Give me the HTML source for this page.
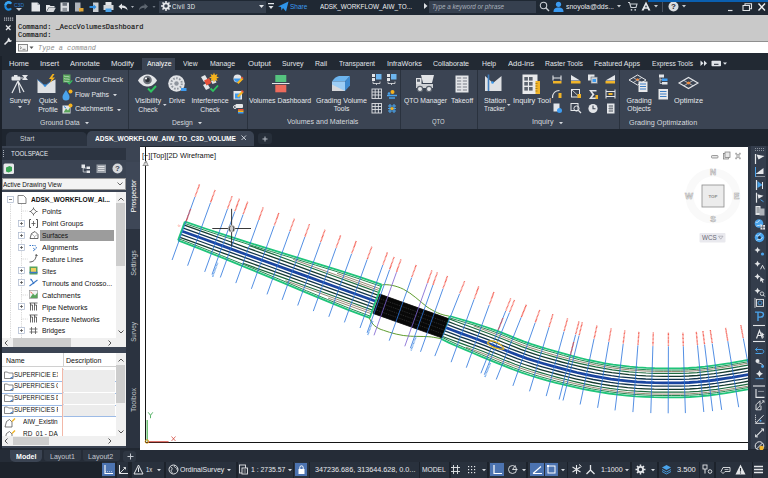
<!DOCTYPE html>
<html><head><meta charset="utf-8"><title>Civil 3D</title>
<style>
*{box-sizing:border-box;margin:0;padding:0}
html,body{width:768px;height:478px;overflow:hidden;background:#212832;font-family:"Liberation Sans",sans-serif;font-size:7.4px;color:#dfe3e8}
.a{position:absolute}
.t{position:absolute;white-space:nowrap;line-height:9px}
.c{text-align:center}
svg{position:absolute;overflow:visible}
#title{left:0;top:0;width:768px;height:15px;background:#1f2833}
#cmd{left:0;top:15px;width:768px;height:41px;background:#222933}
#cmdgray{left:16px;top:15px;width:752px;height:26px;background:#c9c9c9}
#cmdin{left:16px;top:40.600px;width:752px;height:12.400px;background:#fff;border-top:1px solid #8f8f8f}
.mono{font-family:"Liberation Mono",monospace;font-size:7px;color:#111;line-height:8.5px;-webkit-text-stroke:0.13px #111}
#tabs{left:0;top:56px;width:768px;height:14px;background:#222933}
#tabs .t{top:3px;font-size:7.5px;color:#e1e5ea}
#ribbon{left:2px;top:70px;width:766px;height:59.600px;background:#3b4453}
#ribbon .t{color:#e6e9ed;font-size:7.4px;line-height:8.6px}
.sep{position:absolute;top:0;width:1px;height:59px;background:#2a323e}
.pt{color:#d5d9de !important}
#ftabs{left:0;top:129px;width:768px;height:17.500px;background:#1e252f}
#ts{left:0;top:146px;width:139.500px;height:302px;background:#3b4453}
#vp{left:143px;top:147px;width:607px;height:296px;background:#fff;overflow:hidden}
#rt{left:750px;top:146px;width:18px;height:302px;background:#2b3340}
#ltabs{left:0;top:448px;width:768px;height:14px;background:#252c37}
#status{left:0;top:461.800px;width:768px;height:16.500px;background:#29313d}
</style></head><body>
<div class="a" id="title">
  <!-- app logo -->
  <svg style="left:3px;top:0.0px" width="10" height="12" viewBox="0 0 12 13" preserveAspectRatio="none"><path d="M10.800 3.200A5.200 5.200 0 1 0 10.800 9.800L8.600 8.300A2.600 2.600 0 1 1 8.600 4.700Z" fill="#1b8ae0"></path><path d="M10.800 3.200A5.200 5.200 0 0 0 1.500 5.500L4.100 6A2.600 2.600 0 0 1 8.600 4.700Z" fill="#3aa5f2"></path></svg>
  <div class="t" style="left:14px;top:2px;font-size:5px;line-height:6px;color:#2c7fd0">C3D</div>
  <svg style="left:16px;top:8.0px" width="6" height="3"><path d="M0 0h6l-3 3z" fill="#c8ccd2"></path></svg>
  <!-- qat icons -->
  <svg style="left:30px;top:1.0px" width="110" height="12">
    <path d="M1.5 1.5h6l2.5 2.5v6.5h-8.5z" fill="#e4e6e9"></path><path d="M7.5 1.5v2.5h2.500z" fill="#9aa0a8"></path>
    <path d="M16 4h3.5l1 1h4v1.500h-6l-2.500 4.500z" fill="#e4e6e9"></path><path d="M18.800 6.800h7l-2.300 4.200h-7z" fill="#d4d7db"></path>
    <path d="M30.500 1.500h8.500v9h-8.500z" fill="#d9dce0"></path><path d="M32.500 1.500h4.500v3.300h-4.500z" fill="#6d747e"></path><path d="M32.500 6.800h4.500v3.700h-4.500z" fill="#8d939b"></path>
    <path d="M45 1.500h5.500v9h-5.500z" fill="#aeb3ba"></path><path d="M49 7h4.500v3.500h-4.500z" fill="#e0a637"></path>
    <path d="M63 1.500h5.500v9.500h-5.500z" fill="#c9cdd2"></path><path d="M59.500 5h4v-1.700l3 2.700-3 2.700v-1.700h-4z" fill="#2f8de0"></path>
    <path d="M75.500 1h6v3h-6z" fill="#e4e6e9"></path><path d="M73.500 4h10v5h-10z" fill="#d3d6da"></path><path d="M75.500 7.500h6v3.500h-6z" fill="#4aa3ea"></path>
    <path d="M88.500 5.500l3.500-3v2c3 0 5.500 1.500 5.500 5-1-2-2.700-2.800-5.500-2.800v2z" fill="#e4e6e9"></path>
    <path d="M101 5h3l-1.500 2z" fill="#aab0b8"></path>
  </svg>
  <svg style="left:138px;top:1.0px" width="22" height="12">
    <path d="M10 5.500l-3.500-3v2c-3 0-5.500 1.500-5.500 5 1-2 2.700-2.800 5.500-2.800v2z" fill="#5d6670"></path>
    <path d="M14.500 5h3l-1.500 2z" fill="#6d7680"></path>
  </svg>
  <!-- workspace dropdown -->
  <div class="a" style="left:159px;top:1px;width:107px;height:12px;background:#353f4d"></div>
  <svg style="left:161px;top:1.0px" width="10" height="10" viewBox="0 0 10 10"><circle cx="5" cy="5" r="2.700" fill="none" stroke="#e6e8eb" stroke-width="1.800"></circle><g stroke="#e6e8eb" stroke-width="1.500"><path d="M5 0v2M5 8v2M0 5h2M8 5h2M1.500 1.500l1.400 1.400M7.100 7.100l1.400 1.400M8.500 1.500l-1.400 1.400M2.900 7.100l-1.400 1.400"></path></g></svg>
  <div class="t" style="left: 171.6px; top: 1.9px; font-size: 8px; letter-spacing: 0.5px; color: rgb(232, 234, 237); transform-origin: left center; transform: scaleX(0.7414);">Civil 3D</div>
  <svg style="left:259px;top:5.0px" width="5" height="3"><path d="M0 0h5l-2.500 3z" fill="#e0e3e7"></path></svg>
  <svg style="left:268px;top:3.0px" width="6" height="7"><path d="M0 0h6v1.200h-6zM0.500 3h5l-2.500 3z" fill="#e0e3e7"></path></svg>
  <!-- share -->
  <svg style="left:278px;top:1.0px" width="11" height="11"><path d="M0 5.500l10.500-5-2.500 10-3-3.500-1.500 2.500-0.500-3.500z" fill="#2f95ea"></path></svg>
  <div class="t" style="left: 290px; top: 1.9px; font-size: 7.4px; color: rgb(62, 156, 240); transform-origin: left center; transform: scaleX(0.8766);">Share</div>
  <div class="t" style="left: 320.3px; top: 1.9px; font-size: 7px; color: rgb(240, 242, 244); transform-origin: left center; transform: scaleX(0.9074);">ADSK_WORKFLOW_AIW_TO...</div>
  <svg style="left:424px;top:3.0px" width="4" height="6"><path d="M0 0l3.500 3-3.500 3z" fill="#dfe2e6"></path></svg>
  <div class="a" style="left:429px;top:1px;width:107px;height:12px;background:#36404f"></div>
  <div class="t" style="left: 431.5px; top: 1.9px; font-size: 6.8px; font-style: italic; color: rgb(170, 177, 187); transform-origin: left center; transform: scaleX(0.9222);">Type a keyword or phrase</div>
  <svg style="left:539px;top:1.0px" width="11" height="11"><circle cx="4.500" cy="4.500" r="3.200" fill="none" stroke="#c8cdd3" stroke-width="1.100"></circle><path d="M6.800 6.800l3.200 3.200" stroke="#c8cdd3" stroke-width="1.400"></path></svg>
  <svg style="left:553px;top:1.0px" width="11" height="11"><circle cx="5.500" cy="3.300" r="2.600" fill="#3b9af0"></circle><path d="M0.500 11c0-3.500 2-4.500 5-4.500s5 1 5 4.500z" fill="#3b9af0"></path></svg>
  <div class="t" style="left: 566.3px; top: 1.9px; font-size: 7.3px; color: rgb(232, 234, 237); transform-origin: left center; transform: scaleX(0.9523);">snoyola@dds...</div>
  <svg style="left:617px;top:5.0px" width="4" height="3"><path d="M0 0h4l-2 2.500z" fill="#c8cdd3"></path></svg>
  <svg style="left:628px;top:2.0px" width="9" height="9"><path d="M0 0.500h1.500l1.500 5h5l1-3.500h-7" fill="none" stroke="#c8cdd3" stroke-width="1.100"></path><circle cx="3.500" cy="7.800" r="0.900" fill="#c8cdd3"></circle><circle cx="7.200" cy="7.800" r="0.900" fill="#c8cdd3"></circle></svg>
  <svg style="left:641px;top:1.0px" width="10" height="10"><path d="M5 0.500l4.500 9h-2.200l-0.800-1.800h-3l-0.800 1.800h-2.200z" fill="#e4e6e9"></path><path d="M5 4l1 2.300h-2z" fill="#1f2833"></path></svg>
  <svg style="left:654px;top:5.0px" width="4" height="3"><path d="M0 0h4l-2 2.500z" fill="#c8cdd3"></path></svg>
  <div class="a" style="left:662px;top:2px;width:1px;height:10px;background:#4a5260"></div>
  <svg style="left:668px;top:1.0px" width="11" height="11"><circle cx="5.500" cy="5.500" r="5" fill="#d9dce0"></circle><text x="5.500" y="8.300" font-size="8" font-weight="bold" text-anchor="middle" fill="#1f2833" font-family="Liberation Sans">?</text></svg>
  <svg style="left:682px;top:5.0px" width="4" height="3"><path d="M0 0h4l-2 2.500z" fill="#c8cdd3"></path></svg>
  <div class="a" style="left:648px;top:0;width:120px;height:2px;background:#0a5fb0"></div>
  <!-- window buttons -->
  <svg style="left:726px;top:1.0px" width="42" height="12"><path d="M2 9.500h4.500" stroke="#dfe2e6" stroke-width="1.200"></path><path d="M17 4.500h6.500v5h-6.500zM19 4.500v-1.800h6.500v5h-2" fill="none" stroke="#dfe2e6" stroke-width="1.100"></path><path d="M32.500 2.500l6.500 7M39 2.500l-6.500 7" stroke="#eef0f2" stroke-width="1.400"></path></svg>
</div>
<div class="a" id="cmd"></div>
<div class="a" id="cmdgray"></div>
<div class="a" id="cmdin"></div>
<svg style="left:3px;top:16px" width="12" height="38">
  <g fill="#b9bec5"><rect x="1" y="1.500" width="1.200" height="1.200"></rect><rect x="3" y="1.500" width="1.200" height="1.200"></rect><rect x="5" y="1.500" width="1.200" height="1.200"></rect><rect x="7" y="1.500" width="1.200" height="1.200"></rect><rect x="9" y="1.500" width="1.200" height="1.200"></rect><rect x="1" y="3.500" width="1.200" height="1.200"></rect><rect x="3" y="3.500" width="1.200" height="1.200"></rect><rect x="5" y="3.500" width="1.200" height="1.200"></rect><rect x="7" y="3.500" width="1.200" height="1.200"></rect><rect x="9" y="3.500" width="1.200" height="1.200"></rect></g>
  <path d="M3 9.500l4.500 4.500M7.500 9.500l-4.500 4.500" stroke="#e4e6e9" stroke-width="1.300"></path>
  <path d="M1.500 28.500l5-5" stroke="#e4e6e9" stroke-width="1.600"></path><path d="M6 21.500a2.300 2.300 0 1 0 3 3l-1.500-0.200-1-1.300z" fill="#e4e6e9"></path>
</svg>
<div class="t mono" style="left: 18px; top: 22.5px; transform-origin: left center; transform: scaleX(0.9958);">Command: _AeccVolumesDashboard</div>
<div class="t mono" style="left: 18px; top: 31px; transform-origin: left center; transform: scaleX(0.9967);">Command:</div>
<svg style="left:18px;top:44px" width="18" height="8"><rect x="0.500" y="0.500" width="9" height="6.500" fill="#f4f4f4" stroke="#6a6a6a" stroke-width="0.800"></rect><path d="M2 2.500l1.500 1.300-1.500 1.300M4.500 5.300h3" stroke="#555" stroke-width="0.700" fill="none"></path><path d="M11.500 2.500h4l-2 2.500z" fill="#555"></path></svg>
<div class="t mono" style="left: 38px; top: 43.5px; font-style: italic; color: rgb(143, 143, 143); -webkit-text-stroke: 0px; transform-origin: left center; transform: scaleX(0.9862);">Type a command</div>
<div class="a" id="tabs">
  <div class="a" style="left:141.500px;top:1.500px;width:33px;height:12.500px;background:#3b4453"></div>
  <div class="t" style="left: 9px; transform-origin: left center; transform: scaleX(0.9992);">Home</div>
  <div class="t" style="left: 40px; transform-origin: left center; transform: scaleX(1.0125);">Insert</div>
  <div class="t" style="left: 70px; transform-origin: left center; transform: scaleX(0.999);">Annotate</div>
  <div class="t" style="left: 111px; transform-origin: left center; transform: scaleX(1.041);">Modify</div>
  <div class="t" style="left: 146.5px; color: rgb(255, 255, 255); transform-origin: left center; transform: scaleX(0.918);">Analyze</div>
  <div class="t" style="left: 183px; transform-origin: left center; transform: scaleX(0.8992);">View</div>
  <div class="t" style="left: 210px; transform-origin: left center; transform: scaleX(0.9222);">Manage</div>
  <div class="t" style="left: 247.5px; transform-origin: left center; transform: scaleX(1.0215);">Output</div>
  <div class="t" style="left: 281.5px; transform-origin: left center; transform: scaleX(0.921);">Survey</div>
  <div class="t" style="left: 314.5px; transform-origin: left center; transform: scaleX(0.9287);">Rail</div>
  <div class="t" style="left: 339px; transform-origin: left center; transform: scaleX(0.8961);">Transparent</div>
  <div class="t" style="left: 386.5px; transform-origin: left center; transform: scaleX(0.9689);">InfraWorks</div>
  <div class="t" style="left: 433px; transform-origin: left center; transform: scaleX(0.9385);">Collaborate</div>
  <div class="t" style="left: 482px; transform-origin: left center; transform: scaleX(0.9069);">Help</div>
  <div class="t" style="left: 508px; transform-origin: left center; transform: scaleX(1.0221);">Add-ins</div>
  <div class="t" style="left: 545px; transform-origin: left center; transform: scaleX(0.9146);">Raster Tools</div>
  <div class="t" style="left: 594px; transform-origin: left center; transform: scaleX(0.9427);">Featured Apps</div>
  <div class="t" style="left: 652px; transform-origin: left center; transform: scaleX(0.8805);">Express Tools</div>
  <svg style="left:700px;top:4px" width="30" height="7"><path d="M0.500 0.500l3 2.800-3 2.800zM4 0.500l3 2.800-3 2.800z" fill="#e1e5ea"></path><rect x="11.500" y="0.800" width="9.500" height="5.400" rx="0.800" fill="#e1e5ea"></rect><rect x="14" y="3.800" width="4.500" height="1" fill="#222933"></rect><path d="M23 2.500h4l-2 2.300z" fill="#e1e5ea"></path></svg>
</div>
<div class="a" id="ribbon">
  <div class="sep" style="left:125.500px"></div>
  <div class="sep" style="left:244.500px"></div>
  <div class="sep" style="left:398px"></div>
  <div class="sep" style="left:474.500px"></div>
  <div class="sep" style="left:617px"></div>
  <!-- coordinates inside ribbon: x-2, y-70 -->
  <!-- Panel: Ground Data -->
  <svg style="left:7px;top:3px" width="20" height="21" viewBox="0 0 20 21">
    <path d="M9 8L3 20M9 8l2 12M9 8l6 11" stroke="#e4e6e9" stroke-width="1.200" fill="none"></path>
    <rect x="2.500" y="3.500" width="9" height="4" rx="1" fill="#e4e6e9"></rect><rect x="5" y="2" width="3.500" height="2" fill="#e4e6e9"></rect>
    <path d="M13 2h6l-2 2.500 2 2.500h-6l2-2.500z" fill="#e4e6e9"></path><path d="M11.500 5h3" stroke="#e4e6e9"></path>
  </svg>
  <div class="t c" style="left: 2px; top: 27px; width: 32px; transform-origin: center center; transform: scaleX(0.9211);">Survey</div>
  <svg style="left:16px;top:35.500px" width="4" height="3"><path d="M0 0h4l-2 2.300z" fill="#d5d9de"></path></svg>
  <svg style="left:35px;top:2px" width="21" height="22" viewBox="0 0 21 22">
    <path d="M0.500 7.500L8 14l5-4 5.500-2.500V21h-18z" fill="#dfe1e4"></path><path d="M0.500 7.500L8 14l5-4" stroke="#3f7fc0" stroke-width="1" fill="none"></path><circle cx="8" cy="13.500" r="1.300" fill="#2f8de0"></circle>
    <path d="M15.500 2l-3.500 5h2.500l-1.500 4 5-5.500h-2.800l2.300-3.500z" fill="#f5b31e"></path>
  </svg>
  <div class="t c" style="left: 30px; top: 27px; width: 32px; transform-origin: center center; transform: scaleX(0.9626);">Quick</div>
  <div class="t c" style="left: 30px; top: 35.8px; width: 32px; transform-origin: center center; transform: scaleX(0.9402);">Profile</div>
  <svg style="left:60px;top:4px" width="11" height="11"><rect x="1" y="0.500" width="7.500" height="8" fill="#5aa45c"></rect><path d="M2 2c2 1 3 0 5.500 1M2 4.500c2 1 3 0 5.500 1M2 7c2 1 3 0 5.500 1" stroke="#cfe8d0" stroke-width="0.700" fill="none"></path><path d="M5.500 8l1.800 1.800 3-3.500" stroke="#39c060" stroke-width="1.300" fill="none"></path></svg>
  <svg style="left:60px;top:18.500px" width="11" height="11"><path d="M4 1c2 3.500 3.500 5 3.500 7a3.500 3.500 0 0 1-7 0c0-2 1.500-3.500 3.500-7z" fill="#4aa3ea"></path><circle cx="8.500" cy="2.500" r="2" fill="#f5b31e"></circle></svg>
  <svg style="left:60px;top:33px" width="11" height="11"><rect x="0.500" y="2.500" width="8" height="8" fill="#e4e6e9"></rect><path d="M1.500 9.500l2.500-4 2 2 2-3v5z" fill="#5aa45c"></path><circle cx="8.500" cy="2.500" r="2" fill="#f5b31e"></circle><path d="M2 3.500l2 1.500" stroke="#2f8de0"></path></svg>
  <div class="t" style="left: 73px; top: 6px; transform-origin: left center; transform: scaleX(0.9737);">Contour Check</div>
  <div class="t" style="left: 73px; top: 20.5px; transform-origin: left center; transform: scaleX(0.9299);">Flow Paths</div>
  <div class="t" style="left: 73px; top: 35.2px; transform-origin: left center; transform: scaleX(0.9635);">Catchments</div>
  <svg style="left:111px;top:24px" width="4" height="3"><path d="M0 0h4l-2 2.300z" fill="#d5d9de"></path></svg>
  <svg style="left:115px;top:38.500px" width="4" height="3"><path d="M0 0h4l-2 2.300z" fill="#d5d9de"></path></svg>
  <div class="t pt" style="left: 38px; top: 48.5px; transform-origin: left center; transform: scaleX(0.9379);">Ground Data</div>
  <svg style="left:83px;top:52px" width="4" height="3"><path d="M0 0h4l-2 2.300z" fill="#d5d9de"></path></svg>
  <!-- Panel: Design -->
  <svg style="left:135px;top:3px" width="22" height="20" viewBox="0 0 22 20">
    <path d="M1 7.500c3-5 7-6 9.500-6s6.500 1 9.500 6c-3 5-7 6-9.500 6s-6.500-1-9.500-6z" fill="#e4e6e9"></path><circle cx="10.500" cy="7" r="4.300" fill="#6a7078"></circle><circle cx="10.500" cy="7" r="2.300" fill="#2c3138"></circle><circle cx="9" cy="5.500" r="1" fill="#fff"></circle>
    <path d="M11 15.500l3 3 5-5.500" stroke="#2fc45f" stroke-width="2" fill="none"></path>
  </svg>
  <div class="t c" style="left: 128px; top: 27px; width: 36px; transform-origin: center center; transform: scaleX(0.9864);">Visibility</div>
  <div class="t c" style="left: 128px; top: 35.8px; width: 36px; transform-origin: center center; transform: scaleX(0.9259);">Check</div>
  <svg style="left:160.500px;top:33.500px" width="4" height="3"><path d="M0 0h3.600l-1.800 2z" fill="#d5d9de"></path></svg>
  <svg style="left:165px;top:3.500px" width="20" height="20" viewBox="0 0 20 20">
    <circle cx="9.500" cy="9.500" r="8.300" fill="#e1e3e6"></circle><circle cx="9.500" cy="9.500" r="5.300" fill="none" stroke="#8f959d" stroke-width="2" stroke-dasharray="1.500 1.500"></circle><circle cx="9.500" cy="9.500" r="2.200" fill="#8f959d"></circle>
    <rect x="14" y="14" width="5.500" height="3" fill="#3e9cf0"></rect>
  </svg>
  <div class="t c" style="left: 159px; top: 27px; width: 32px; transform-origin: center center; transform: scaleX(0.9275);">Drive</div>
  <svg style="left:197px;top:2px" width="22" height="22" viewBox="0 0 22 22">
    <path d="M2 5l4-2 3 5-4 2zM4 13l4-2 3 5-4 2z" fill="#e4e6e9"></path><rect x="6" y="7" width="5.500" height="5.500" transform="rotate(-25 8.700 9.700)" fill="#e8503a"></rect><path d="M12 9l4-1.500 1.500 3-4 1.500z" fill="#e4e6e9"></path>
    <path d="M15 0.500l1 2.500 2.500-1-1 2.500 2.500 1-2.500 1 1 2.500-2.500-1-1 2.500-1-2.500-2.500 1 1-2.500-2.500-1 2.500-1-1-2.500 2.500 1z" fill="#f5b31e"></path>
    <path d="M11.500 16.500l2.500 2.500 5-5.500" stroke="#2fc45f" stroke-width="1.800" fill="none"></path>
  </svg>
  <div class="t c" style="left: 184px; top: 27px; width: 48px; transform-origin: center center; transform: scaleX(0.9429);">Interference</div>
  <div class="t c" style="left: 184px; top: 35.8px; width: 48px; transform-origin: center center; transform: scaleX(0.9259);">Check</div>
  <svg style="left:231px;top:4px" width="11" height="11"><circle cx="4.500" cy="4.500" r="4" fill="#e4e6e9"></circle><path d="M1 4.500a3.500 3.500 0 0 0 7 0z" fill="#3e9cf0"></path><path d="M4 8.500l5-5 1.500 1.500-5 5z" fill="#f5b31e"></path><path d="M8.500 3l1.500 1.500" stroke="#e8503a" stroke-width="1.500"></path></svg>
  <svg style="left:231px;top:18.500px" width="11" height="11"><rect x="0.500" y="2" width="8.500" height="8.500" fill="#e4e6e9"></rect><rect x="2" y="4.500" width="5.500" height="5" fill="#3e9cf0"></rect><path d="M4 7l5-5 1.500 1.500-5 5z" fill="#f5b31e"></path><path d="M8.500 1.500l1.800 1.800" stroke="#e8503a" stroke-width="1.500"></path></svg>
  <svg style="left:231px;top:33px" width="11" height="11"><rect x="2.500" y="1" width="7.500" height="4" rx="1" fill="#e4e6e9"></rect><circle cx="2" cy="4" r="1.500" fill="none" stroke="#e4e6e9"></circle><rect x="5" y="6" width="5.500" height="1.500" fill="#e8503a"></rect><rect x="5" y="7.500" width="5.500" height="1.500" fill="#f5b31e"></rect><rect x="5" y="9" width="5.500" height="1.500" fill="#3e9cf0"></rect></svg>
  <div class="t pt" style="left: 170px; top: 48.5px; transform-origin: left center; transform: scaleX(0.9037);">Design</div>
  <svg style="left:196px;top:52px" width="4" height="3"><path d="M0 0h4l-2 2.300z" fill="#d5d9de"></path></svg>
  <!-- Panel: Volumes and Materials -->
  <svg style="left:269px;top:4px" width="20" height="19"><rect x="4.300" y="1" width="11" height="7" fill="#55c37f"></rect><rect x="1" y="9" width="17.500" height="1" fill="#e4e6e9"></rect><rect x="4.300" y="10.800" width="11" height="7.500" fill="#ec6a5c"></rect></svg>
  <div class="t" style="left: 247.4px; top: 26.5px; transform-origin: left center; transform: scaleX(0.9345);">Volumes Dashboard</div>
  <svg style="left:329px;top:5px" width="20" height="17" viewBox="0 0 20 17"><path d="M1 6.500c2-3 4-5 7-5.500h11l-5 5.500z" fill="#6db5ef"></path><path d="M14 6.500l5-5.500v9.500l-5 5.500z" fill="#3e8ad0"></path><path d="M1 6.500h13v9.500h-13z" fill="#9ccdf5"></path><path d="M1 9.500l13 6.500h-13z" fill="#d6d8db"></path></svg>
  <div class="t c" style="left: 310px; top: 26.5px; width: 59px; transform-origin: center center; transform: scaleX(0.9623);">Grading Volume</div>
  <div class="t c" style="left: 310px; top: 35.4px; width: 59px; transform-origin: center center; transform: scaleX(0.9093);">Tools</div>

  <svg style="left:369px;top:3px" width="27" height="42">
    <g fill="#e4e6e9"><rect x="1" y="1" width="3" height="3"></rect><rect x="5" y="1" width="5.500" height="5.500" fill="#6db5ef"></rect><rect x="1" y="5" width="3" height="3"></rect><path d="M2 8.500v2h7v-2M5.500 10.500v1.500" stroke="#e4e6e9" fill="none" stroke-width="0.800"></path>
    <rect x="16" y="1" width="3" height="3"></rect><rect x="20" y="1" width="5.500" height="5.500" fill="#6db5ef"></rect><rect x="16" y="5" width="3" height="3"></rect><path d="M17 8.500v2h7v-2M20.500 10.500v1.500" stroke="#e4e6e9" fill="none" stroke-width="0.800"></path></g>
    <g fill="none" stroke="#dfe1e4" stroke-width="0.900"><rect x="1" y="16" width="9.500" height="9.500"></rect><path d="M1 19h9.500M1 22h9.500M4.200 16v9.500M7.400 16v9.500"></path><rect x="1" y="30.500" width="9.500" height="9.500"></rect><path d="M1 33.500h9.500M1 36.500h9.500M4.200 30.500v9.500M7.400 30.500v9.500"></path></g>
    <circle cx="21.500" cy="19" r="2" fill="#f5b31e"></circle><path d="M16 22.500h10M18 25h6" stroke="#4aa3ea" stroke-width="1.300"></path><circle cx="18" cy="20.500" r="1.300" fill="#4aa3ea"></circle>
    <path d="M17 33h8M17 35.500h8M17 38h8M19 31v9M23 31v9" stroke="#4aa3ea" stroke-width="1.100"></path><circle cx="21" cy="35.500" r="1.600" fill="#f5b31e"></circle>
  </svg>
  <div class="t pt" style="left: 285px; top: 48px; transform-origin: left center; transform: scaleX(0.955);">Volumes and Materials</div>
  <!-- Panel: QTO -->
  <svg style="left:413px;top:4px" width="20" height="19" viewBox="0 0 20 19"><path d="M6 1h13l-2 8h-9z" fill="#e1e3e6"></path><path d="M1 4h5.500v8h-5.500z" fill="#e1e3e6"></path><rect x="2" y="5.200" width="3" height="2.600" fill="#5b636e"></rect><rect x="1" y="10" width="17" height="4" fill="#cfd2d6"></rect><circle cx="5" cy="15" r="2.600" fill="#e4e6e9" stroke="#5b636e" stroke-width="1.200"></circle><circle cx="14" cy="15" r="2.600" fill="#e4e6e9" stroke="#5b636e" stroke-width="1.200"></circle></svg>
  <div class="t" style="left: 401.5px; top: 26.5px; transform-origin: left center; transform: scaleX(0.9128);">QTO Manager</div>
  <svg style="left:452.500px;top:4.500px" width="14" height="18"><rect x="0.500" y="0.500" width="13" height="17" fill="#e4e6e9"></rect><path d="M2 3h4.200M7.800 3h4.200M2 6h4.200M7.800 6h4.200M2 9h4.200M7.800 9h4.200M2 12h4.200M7.800 12h4.200M2 15h4.200M7.800 15h4.200" stroke="#9a9fa7" stroke-width="1.300"></path></svg>
  <div class="t" style="left: 448.5px; top: 26.5px; transform-origin: left center; transform: scaleX(0.9366);">Takeoff</div>
  <div class="t pt" style="left: 429.7px; top: 48px; transform-origin: left center; transform: scaleX(0.7992);">QTO</div>
  <!-- Panel: Inquiry -->
  <svg style="left:482px;top:4px" width="19" height="18" viewBox="0 0 19 18"><path d="M1 2l8 7 8.500-7v15h-16.500z" fill="#dfe1e4"></path><path d="M4.500 0.500v16.500" stroke="#3f7fc0" stroke-width="1.600"></path><circle cx="8.500" cy="8.500" r="1.300" fill="#3e9cf0"></circle></svg>
  <div class="t" style="left: 481.8px; top: 26.5px; transform-origin: left center; transform: scaleX(0.9646);">Station</div>
  <div class="t" style="left: 481.8px; top: 35.4px; transform-origin: left center; transform: scaleX(0.8555);">Tracker</div>
  <svg style="left:504.800px;top:33.500px" width="4" height="3"><path d="M0 0h3.600l-1.800 2z" fill="#d5d9de"></path></svg>
  <svg style="left:520px;top:3.500px" width="20" height="21" viewBox="0 0 20 21"><rect x="0.500" y="0.500" width="15" height="19.500" fill="#e8e9eb"></rect><g fill="#5b636e"><rect x="2.300" y="3" width="3.600" height="3.600"></rect><rect x="7" y="3" width="3.600" height="3.600"></rect><rect x="2.300" y="8" width="3.600" height="3.600"></rect><rect x="7" y="8" width="3.600" height="3.600"></rect><rect x="2.300" y="13" width="3.600" height="3.600"></rect><rect x="7" y="13" width="3.600" height="3.600"></rect></g><rect x="13.500" y="7" width="4.500" height="13" fill="#f0b429"></rect><path d="M13.500 9.500h2M13.500 12h2M13.500 14.500h2M13.500 17h2" stroke="#7a5a10" stroke-width="0.600"></path></svg>
  <div class="t" style="left: 510.5px; top: 26.5px; transform-origin: left center; transform: scaleX(1.0061);">Inquiry Tool</div>
  <svg style="left:549px;top:3px" width="66" height="42">
    <!-- col1 -->
    <path d="M2 2.500v5M10 2.500v5M2 5h8" stroke="#e4e6e9" stroke-width="1.100" fill="none"></path><rect x="2" y="8" width="8.500" height="2.500" fill="#f0b429"></rect>
    <path d="M1.500 25c0-5 3-7.500 7-7.500" stroke="#e4e6e9" stroke-width="1.200" fill="none"></path><rect x="7.500" y="20" width="3" height="5" fill="#f0b429"></rect>
    <rect x="2.500" y="30.500" width="6" height="8" fill="#e4e6e9"></rect><circle cx="8.500" cy="37.500" r="2.500" fill="#3e9cf0"></circle>
    <!-- col2 -->
    <path d="M20 2v5.500h9z" fill="#e4e6e9"></path><rect x="20" y="8" width="9.500" height="2.500" fill="#f0b429"></rect>
    <rect x="20.500" y="16.500" width="8" height="7.500" fill="none" stroke="#e4e6e9" stroke-width="1"></rect><path d="M20.500 16.500l8 7.500" stroke="#e4e6e9" stroke-width="0.800"></path><rect x="26.500" y="21" width="3.500" height="4" fill="#f0b429"></rect>
    <rect x="20" y="30.500" width="7" height="7" fill="none" stroke="#e4e6e9" stroke-width="1"></rect><circle cx="25.500" cy="35.500" r="2.600" fill="none" stroke="#e4e6e9" stroke-width="1"></circle><path d="M27.500 37.500l2.500 2.500" stroke="#e4e6e9" stroke-width="1.200"></path>
    <!-- col3 -->
    <rect x="37" y="1.500" width="6.500" height="6" fill="#e4e6e9"></rect><rect x="40" y="4" width="6.500" height="6.500" fill="#cfd2d6" stroke="#5b636e" stroke-width="0.600"></rect><rect x="41.500" y="6" width="3.500" height="3" fill="#3e9cf0"></rect>
    <path d="M38 17h7.500v1.500h-4.500l2.500 3-2.500 3h4.500v1.500h-7.500l3.300-4.500z" fill="#e4e6e9"></path><rect x="44.500" y="22" width="2.500" height="4" fill="#f0b429"></rect>
    <circle cx="42" cy="35.500" r="4.600" fill="#e4e6e9"></circle><path d="M42 32.500v3.300h2.500" stroke="#3b4453" stroke-width="1.100" fill="none"></path>
    <!-- col4 -->
    <path d="M54.500 7.500l9.500-5.500v5.500z" fill="#e4e6e9"></path><rect x="54.500" y="8" width="9.500" height="2.500" fill="#f0b429"></rect>
    <path d="M55 16.500v9M64 16.500v9M55 18.500h9M55 23.500h9" stroke="#e4e6e9" stroke-width="1" fill="none"></path><rect x="57.500" y="20" width="4" height="2" fill="#f0b429"></rect>
    <rect x="56" y="30.500" width="7.500" height="10" fill="#e4e6e9"></rect><path d="M57.500 33h4.500M57.500 35.500h4.500M57.500 38h4.500M59 32v7M61 32v7" stroke="#5b636e" stroke-width="0.700"></path>
  </svg>
  <div class="t pt" style="left: 529.5px; top: 48px; transform-origin: left center; transform: scaleX(0.969);">Inquiry</div>
  <svg style="left:556.500px;top:52px" width="4" height="3"><path d="M0 0h4l-2 2.300z" fill="#d5d9de"></path></svg>
  <!-- Panel: Grading Optimization -->
  <svg style="left:626px;top:4px" width="22" height="19" viewBox="0 0 22 19"><path d="M1 6l8.500-5 8.500 5-8.500 5z" fill="none" stroke="#e4e6e9" stroke-width="1"></path><path d="M5.200 3.500l8.500 5M13.800 3.500l-8.500 5" stroke="#e4e6e9" stroke-width="0.700"></path><path d="M7.500 5.500l2-1.200 2 1.200-2 1.200z" fill="#f08a3c"></path><rect x="10.500" y="7.500" width="9" height="10.500" fill="#e8e9eb"></rect><path d="M12 10h6M12 12.500h6M12 15h6" stroke="#3e7fc5" stroke-width="1.100"></path></svg>
  <div class="t c" style="left: 619px; top: 26.5px; width: 36px; transform-origin: center center; transform: scaleX(0.9583);">Grading</div>
  <div class="t c" style="left: 619px; top: 35.4px; width: 36px; transform-origin: center center; transform: scaleX(0.9297);">Objects</div>
  <svg style="left:656px;top:4px" width="11" height="26"><rect x="1" y="0.500" width="5" height="3" fill="#e4e6e9"></rect><rect x="4" y="4.500" width="5.500" height="2.500" fill="#3e9cf0"></rect><rect x="4" y="8" width="5.500" height="2.500" fill="#e4e6e9"></rect><path d="M2 3.500v6h2M2 5.800h2" stroke="#e4e6e9" stroke-width="0.700" fill="none"></path><rect x="0.500" y="15" width="9.500" height="10.500" fill="#e8e9eb"></rect><path d="M2 17.500h6.500M2 20h6.500M2 22.500h6.500" stroke="#3e7fc5" stroke-width="1.100"></path></svg>
  <svg style="left:676px;top:7px" width="21" height="13" viewBox="0 0 21 13"><path d="M1 6l9.500-5.500 9.500 5.500-9.500 5.500z" fill="none" stroke="#e4e6e9" stroke-width="1.100"></path><path d="M5.700 3.300l9.500 5.500M15.300 3.300l-9.500 5.500" stroke="#e4e6e9" stroke-width="0.700"></path><path d="M8 6l2.500-1.500 2.500 1.500-2.500 1.500z" fill="#f08a3c"></path></svg>
  <div class="t" style="left: 672.2px; top: 26.5px; transform-origin: left center; transform: scaleX(0.9941);">Optimize</div>
  <div class="t pt" style="left: 627.2px; top: 48.5px; transform-origin: left center; transform: scaleX(0.9824);">Grading Optimization</div>
</div>
<div class="a" id="ftabs">
  <div class="a" style="left:6px;top:2.500px;width:80.500px;height:14.500px;background:#2b3340;border-radius:5px 5px 0 0"></div>
  <div class="t" style="left: 20.3px; top: 4.5px; font-size: 7.4px; color: rgb(201, 206, 213); transform-origin: left center; transform: scaleX(0.9161);">Start</div>
  <div class="a" style="left:87px;top:2.200px;width:167px;height:15px;background:#3b4453;border-radius:5px 5px 0 0"></div>
  <div class="t" style="left: 94.5px; top: 4.5px; font-size: 7.3px; font-weight: bold; color: rgb(255, 255, 255); transform-origin: left center; transform: scaleX(0.9065);">ADSK_WORKFLOW_AIW_TO_C3D_VOLUME</div>
  <svg style="left:241px;top:6px" width="6" height="6"><path d="M0.500 0.500l4.500 4.500M5 0.500l-4.500 4.500" stroke="#c9ced5" stroke-width="1"></path></svg>
  <div class="a" style="left:258px;top:4px;width:14px;height:11px;background:#272f3a;border-radius:3px"></div>
  <svg style="left:262.300px;top:6.500px" width="6" height="6"><path d="M3 0.500v5M0.500 3h5" stroke="#b9bfc7" stroke-width="1"></path></svg>
</div>
<div class="a" id="ts">
<div class="a" style="left:1.500px;top:2.300px;width:124.300px;height:12.200px;background:#2c3441"></div>
<svg style="left:3px;top:4px" width="3" height="8"><g fill="#aab0b8"><rect x="0" y="0" width="1" height="1"></rect><rect x="0" y="2" width="1" height="1"></rect><rect x="0" y="4" width="1" height="1"></rect><rect x="0" y="6" width="1" height="1"></rect></g></svg>
<div class="t" style="left: 10.7px; top: 2.7px; font-size: 8px; color: rgb(230, 233, 237); transform-origin: left center; transform: scaleX(0.7702);">TOOLSPACE</div>
<svg style="left:3px;top:17px" width="12" height="12"><rect x="0.500" y="0.500" width="10.500" height="10.500" rx="1.500" fill="#e8e9eb"></rect><path d="M3 4.500l3.500-1.500 2.500 1v4l-3.500 1.500-2.500-1z" fill="#3aa655"></path></svg>
<svg style="left:81px;top:18px" width="10" height="10"><rect x="0.500" y="0.500" width="3.500" height="3.500" fill="#e4e6e9"></rect><rect x="5.500" y="2.500" width="3.500" height="2.500" fill="#e4e6e9"></rect><rect x="5.500" y="6.500" width="3.500" height="2.500" fill="#e4e6e9"></rect><path d="M2.200 4v4h3M2.200 4h3" stroke="#e4e6e9" stroke-width="0.700" fill="none"></path></svg>
<svg style="left:96px;top:18px" width="11" height="10"><rect x="0.500" y="0.500" width="9.500" height="8.500" fill="#9aa0a8"></rect><path d="M2 2.500h6.500M2 4.500h6.500M2 6.500h6.500" stroke="#e4e6e9" stroke-width="0.900"></path></svg>
<svg style="left:111.500px;top:17px" width="11" height="11"><circle cx="5.500" cy="5.500" r="5" fill="#d5d8dc"></circle><text x="5.500" y="8.300" font-size="8" font-weight="bold" text-anchor="middle" fill="#3b4453" font-family="Liberation Sans">?</text></svg>
<div class="a" style="left:1.500px;top:32.200px;width:124.300px;height:11.500px;background:#f3f3f3;border:0.500px solid #9a9a9a"></div>
<div class="t" style="left: 3.3px; top: 33.8px; font-size: 7.4px; color: rgb(17, 17, 17); transform-origin: left center; transform: scaleX(0.8716);">Active Drawing View</div>
<svg style="left:117px;top:36.200px" width="6" height="4"><path d="M0.500 0.500l2.500 2.500 2.500-2.500" stroke="#444" stroke-width="0.800" fill="none"></path></svg>
<div class="a" style="left:1.500px;top:46px;width:124px;height:155px;background:#fff"></div>
<div class="a" style="left:40px;top:83.500px;width:74px;height:11px;background:#9c9c9c"></div>
<svg style="left:0;top:46px" width="40" height="150"><path d="M10.500 12v135" stroke="#b8b8b8" stroke-width="0.700" stroke-dasharray="0.800 1"></path><path d="M21.500 12v135" stroke="#b8b8b8" stroke-width="0.700" stroke-dasharray="0.800 1"></path></svg>
<svg style="left:6.500px;top:49.7px" width="7" height="7"><rect x="0.500" y="0.500" width="6" height="6" fill="#fff" stroke="#a9b6cc" stroke-width="0.700"></rect><path d="M2 3.500h3" stroke="#444" stroke-width="0.700"></path></svg>
<svg style="left:16.500px;top:48.7px" width="10" height="9"><path d="M1 0.500h5.500l2.500 2.500v5.500h-8z" fill="#fff" stroke="#666" stroke-width="0.800"></path></svg>
<div class="t" style="left: 30.8px; top: 49px; font-size: 7.6px; font-weight: bold; color: rgb(17, 17, 17); transform-origin: left center; transform: scaleX(0.8739);">ADSK_WORKFLOW_AI...</div>
<svg style="left:21px;top:64.1px" width="7" height="2"><path d="M0.500 1h6" stroke="#b8b8b8" stroke-width="0.700" stroke-dasharray="0.800 1"></path></svg>
<div class="t" style="left: 41.8px; top: 60.9px; font-size: 7.6px; color: rgb(17, 17, 17); transform-origin: left center; transform: scaleX(0.919);">Points</div>
<svg style="left:18px;top:73.6px" width="7" height="7"><rect x="0.500" y="0.500" width="6" height="6" fill="#fff" stroke="#a9b6cc" stroke-width="0.700"></rect><path d="M2 3.500h3M3.500 2v3" stroke="#444" stroke-width="0.700"></path></svg>
<div class="t" style="left: 41.8px; top: 72.9px; font-size: 7.6px; color: rgb(17, 17, 17); transform-origin: left center; transform: scaleX(0.9294);">Point Groups</div>
<svg style="left:18px;top:85.5px" width="7" height="7"><rect x="0.500" y="0.500" width="6" height="6" fill="#fff" stroke="#a9b6cc" stroke-width="0.700"></rect><path d="M2 3.500h3M3.500 2v3" stroke="#444" stroke-width="0.700"></path></svg>
<div class="t" style="left: 41.8px; top: 84.8px; font-size: 7.6px; color: rgb(17, 17, 17); transform-origin: left center; transform: scaleX(0.8709);">Surfaces</div>
<svg style="left:18px;top:97.5px" width="7" height="7"><rect x="0.500" y="0.500" width="6" height="6" fill="#fff" stroke="#a9b6cc" stroke-width="0.700"></rect><path d="M2 3.500h3M3.500 2v3" stroke="#444" stroke-width="0.700"></path></svg>
<div class="t" style="left: 41.8px; top: 96.8px; font-size: 7.6px; color: rgb(17, 17, 17); transform-origin: left center; transform: scaleX(0.9633);">Alignments</div>
<svg style="left:21px;top:111.9px" width="7" height="2"><path d="M0.500 1h6" stroke="#b8b8b8" stroke-width="0.700" stroke-dasharray="0.800 1"></path></svg>
<div class="t" style="left: 41.8px; top: 108.7px; font-size: 7.6px; color: rgb(17, 17, 17); transform-origin: left center; transform: scaleX(0.8872);">Feature Lines</div>
<svg style="left:18px;top:121.4px" width="7" height="7"><rect x="0.500" y="0.500" width="6" height="6" fill="#fff" stroke="#a9b6cc" stroke-width="0.700"></rect><path d="M2 3.500h3M3.500 2v3" stroke="#444" stroke-width="0.700"></path></svg>
<div class="t" style="left: 41.8px; top: 120.7px; font-size: 7.6px; color: rgb(17, 17, 17); transform-origin: left center; transform: scaleX(0.8348);">Sites</div>
<svg style="left:18px;top:133.3px" width="7" height="7"><rect x="0.500" y="0.500" width="6" height="6" fill="#fff" stroke="#a9b6cc" stroke-width="0.700"></rect><path d="M2 3.500h3M3.500 2v3" stroke="#444" stroke-width="0.700"></path></svg>
<div class="t" style="left: 41.8px; top: 132.6px; font-size: 7.6px; color: rgb(17, 17, 17); transform-origin: left center; transform: scaleX(0.9121);">Turnouts and Crosso...</div>
<svg style="left:21px;top:147.8px" width="7" height="2"><path d="M0.500 1h6" stroke="#b8b8b8" stroke-width="0.700" stroke-dasharray="0.800 1"></path></svg>
<div class="t" style="left: 41.8px; top: 144.6px; font-size: 7.6px; color: rgb(17, 17, 17); transform-origin: left center; transform: scaleX(0.9499);">Catchments</div>
<svg style="left:18px;top:157.2px" width="7" height="7"><rect x="0.500" y="0.500" width="6" height="6" fill="#fff" stroke="#a9b6cc" stroke-width="0.700"></rect><path d="M2 3.500h3M3.500 2v3" stroke="#444" stroke-width="0.700"></path></svg>
<div class="t" style="left: 41.8px; top: 156.6px; font-size: 7.6px; color: rgb(17, 17, 17); transform-origin: left center; transform: scaleX(0.9292);">Pipe Networks</div>
<svg style="left:21px;top:171.7px" width="7" height="2"><path d="M0.500 1h6" stroke="#b8b8b8" stroke-width="0.700" stroke-dasharray="0.800 1"></path></svg>
<div class="t" style="left: 41.8px; top: 168.5px; font-size: 7.6px; color: rgb(17, 17, 17); transform-origin: left center; transform: scaleX(0.9009);">Pressure Networks</div>
<svg style="left:18px;top:181.1px" width="7" height="7"><rect x="0.500" y="0.500" width="6" height="6" fill="#fff" stroke="#a9b6cc" stroke-width="0.700"></rect><path d="M2 3.500h3M3.500 2v3" stroke="#444" stroke-width="0.700"></path></svg>
<div class="t" style="left: 41.8px; top: 180.4px; font-size: 7.6px; color: rgb(17, 17, 17); transform-origin: left center; transform: scaleX(0.8971);">Bridges</div>
<svg style="left:28.500px;top:60.6px" width="9" height="9"><path d="M4.500 0.500v8M0.500 4.500h8" stroke="#555" stroke-width="0.900"></path><rect x="2.500" y="2.500" width="4" height="4" fill="#fff" stroke="#555" stroke-width="0.800" transform="rotate(45 4.500 4.500)"></rect></svg>
<svg style="left:28.500px;top:72.6px" width="9" height="9"><path d="M2 0.500h-1.500v8h1.500M7 0.500h1.500v8h-1.500" stroke="#444" stroke-width="0.900" fill="none"></path><path d="M4.500 2v5M2.500 4.500h4" stroke="#555" stroke-width="0.800"></path></svg>
<svg style="left:28.500px;top:84.5px" width="9" height="9"><path d="M1 7.500l1.500-5 3.500-2 3 3v4z" fill="#fff" stroke="#444" stroke-width="0.800"></path><path d="M2.500 2.500l3 3 3-2M5.500 5.500v2" stroke="#777" stroke-width="0.500" fill="none"></path></svg>
<svg style="left:28.500px;top:96.5px" width="9" height="9"><path d="M0.500 2.500h5c2.500 0 2.500 4 0 4" stroke="#3a78c8" stroke-width="1" fill="none" stroke-dasharray="1.500 1"></path><path d="M4 5l2 1.500-2 1.500" stroke="#3a78c8" stroke-width="0.800" fill="none"></path></svg>
<svg style="left:28.500px;top:108.4px" width="9" height="9"><path d="M0.500 8c4 0 6-2 7-7" stroke="#444" stroke-width="0.900" fill="none"></path><path d="M6 1.500l1.500-1 1 1.500" stroke="#444" stroke-width="0.800" fill="none"></path></svg>
<svg style="left:28.500px;top:120.4px" width="9" height="9"><rect x="0.500" y="0.500" width="8" height="8" fill="#5aa45c"></rect><rect x="2" y="2" width="5" height="4" fill="#f0d060"></rect><path d="M0.500 6.500h8" stroke="#3a78c8" stroke-width="1.500"></path></svg>
<svg style="left:28.500px;top:132.3px" width="9" height="9"><path d="M0.500 8l8-6M2 1l3 5" stroke="#3a78c8" stroke-width="1.100" fill="none"></path><path d="M1 0.500l2 1-1 1.500z" fill="#3a78c8"></path></svg>
<svg style="left:28.500px;top:144.3px" width="9" height="9"><rect x="0.500" y="0.500" width="8" height="8" fill="#f3f3f3" stroke="#888" stroke-width="0.600"></rect><path d="M1 8l3-4.500 2 2 2.500-3v5.500z" fill="#5aa45c"></path><path d="M1.500 2l2 1.500" stroke="#e8503a" stroke-width="0.900"></path></svg>
<svg style="left:28.500px;top:156.2px" width="9" height="9"><path d="M0.500 1h8M1.500 1v7.500M3.500 3v5.500M1.500 3h2M5.500 1v7.500M7.500 3v5.500M5.500 3h2" stroke="#444" stroke-width="0.800" fill="none"></path></svg>
<svg style="left:28.500px;top:168.2px" width="9" height="9"><path d="M0.500 1h8M1.500 1v7.500M3.500 3v5.500M1.500 3h2M5.500 1v7.500M7.500 3v5.500M5.500 3h2" stroke="#444" stroke-width="0.800" fill="none"></path></svg>
<svg style="left:28.500px;top:180.1px" width="9" height="9"><path d="M0.500 3h8M0.500 6h8M2.500 1v7M6.500 1v7" stroke="#555" stroke-width="0.800"></path></svg>
<div class="a" style="left:115.500px;top:46px;width:10px;height:145.500px;background:#f0f0f0"></div>
<div class="a" style="left:115.800px;top:57px;width:9.200px;height:62.500px;background:#cdcdcd"></div>
<svg style="left:117.500px;top:51px" width="6" height="4"><path d="M0.500 3.500l2.500-2.500 2.500 2.500" stroke="#555" stroke-width="1" fill="none"></path></svg>
<svg style="left:117.500px;top:183.500px" width="6" height="4"><path d="M0.500 0.500l2.500 2.500 2.500-2.500" stroke="#555" stroke-width="1" fill="none"></path></svg>
<div class="a" style="left:1.500px;top:191.500px;width:124px;height:9.500px;background:#f0f0f0"></div>
<div class="a" style="left:13px;top:192px;width:58px;height:8.500px;background:#cdcdcd"></div>
<svg style="left:3.500px;top:193.500px" width="4" height="6"><path d="M3.500 0.500l-2.500 2.500 2.500 2.500" stroke="#555" stroke-width="1" fill="none"></path></svg>
<svg style="left:107.500px;top:193.500px" width="4" height="6"><path d="M0.500 0.500l2.500 2.500-2.500 2.500" stroke="#555" stroke-width="1" fill="none"></path></svg>
<div class="a" style="left:1.500px;top:207.3px;width:124px;height:92.200px;background:#fff"></div>
<div class="a" style="left:1.500px;top:207.3px;width:114px;height:14px;background:#fff;border-bottom:0.700px solid #d0d0d0"></div>
<div class="a" style="left:62.500px;top:207.3px;width:0.700px;height:14px;background:#d0d0d0"></div>
<div class="t" style="left: 5.5px; top: 210.3px; font-size: 7.3px; color: rgb(17, 17, 17); transform-origin: left center; transform: scaleX(0.9554);">Name</div>
<div class="t" style="left: 66px; top: 210.3px; font-size: 7.3px; color: rgb(17, 17, 17); transform-origin: left center; transform: scaleX(0.9699);">Description</div>
<div class="a" style="left:1.500px;top:234.7px;width:114px;height:0.800px;background:#9dbbe6"></div>
<div class="a" style="left:62.500px;top:223.1px;width:0.700px;height:12px;background:#c5d6ee"></div>
<svg style="left:3.500px;top:224.6px" width="10" height="9"><path d="M0.500 1h3l1 1h4.500v5.500h-8.500z" fill="#fff" stroke="#555" stroke-width="0.700"></path><path d="M6 7.500l3.500-2" stroke="#3a78c8" stroke-width="1"></path></svg>
<div class="t" style="left: 13.8px; top: 224.5px; font-size: 7.1px; color: rgb(17, 17, 17); transform-origin: left center; transform: scaleX(0.8609);">SUPERFICIE EX</div>
<div class="a" style="left:1.500px;top:246.6px;width:114px;height:0.800px;background:#9dbbe6"></div>
<div class="a" style="left:62.500px;top:235.0px;width:0.700px;height:12px;background:#c5d6ee"></div>
<svg style="left:3.500px;top:236.5px" width="10" height="9"><path d="M0.500 1h3l1 1h4.500v5.500h-8.500z" fill="#fff" stroke="#555" stroke-width="0.700"></path><path d="M6 7.500l3.500-2" stroke="#3a78c8" stroke-width="1"></path></svg>
<div class="t" style="left: 13.8px; top: 236.4px; font-size: 7.1px; color: rgb(17, 17, 17); transform-origin: left center; transform: scaleX(0.8547);">SUPERFICIES C</div>
<div class="a" style="left:1.500px;top:258.5px;width:114px;height:0.800px;background:#9dbbe6"></div>
<div class="a" style="left:62.500px;top:246.9px;width:0.700px;height:12px;background:#c5d6ee"></div>
<svg style="left:3.500px;top:248.4px" width="10" height="9"><path d="M0.500 1h3l1 1h4.500v5.500h-8.500z" fill="#fff" stroke="#555" stroke-width="0.700"></path><path d="M6 7.500l3.500-2" stroke="#3a78c8" stroke-width="1"></path></svg>
<div class="t" style="left: 13.8px; top: 248.3px; font-size: 7.1px; color: rgb(17, 17, 17); transform-origin: left center; transform: scaleX(0.8547);">SUPERFICIES D</div>
<div class="a" style="left:1.500px;top:270.4px;width:114px;height:0.800px;background:#9dbbe6"></div>
<div class="a" style="left:62.500px;top:258.8px;width:0.700px;height:12px;background:#c5d6ee"></div>
<svg style="left:3.500px;top:260.3px" width="10" height="9"><path d="M0.500 1h3l1 1h4.500v5.500h-8.500z" fill="#fff" stroke="#555" stroke-width="0.700"></path><path d="M6 7.500l3.500-2" stroke="#3a78c8" stroke-width="1"></path></svg>
<div class="t" style="left: 13.8px; top: 260.2px; font-size: 7.1px; color: rgb(17, 17, 17); transform-origin: left center; transform: scaleX(0.8609);">SUPERFICIES P</div>
<svg style="left:3.500px;top:271.7px" width="12" height="10"><path d="M1 9l1.500-5.500 3-2 2.500 2.500v5z" fill="#fff" stroke="#444" stroke-width="0.700"></path><path d="M8 3.500l3-3" stroke="#f0b429" stroke-width="1.500"></path></svg>
<div class="t" style="left: 23px; top: 272.1px; font-size: 7.1px; color: rgb(17, 17, 17); transform-origin: left center; transform: scaleX(0.9072);">AIW_Existin</div>
<svg style="left:3.500px;top:283.6px" width="12" height="10"><path d="M1 9l1.500-5.500 3-2 2.500 2.500v5z" fill="#fff" stroke="#444" stroke-width="0.700"></path><path d="M8 3.500l3-3" stroke="#f0b429" stroke-width="1.500"></path></svg>
<div class="t" style="left: 23px; top: 284px; font-size: 7.1px; color: rgb(17, 17, 17); transform-origin: left center; transform: scaleX(0.9072);">RD_01 - DA</div>
<div class="a" style="left:63px;top:223.5px;width:52px;height:11px;background:#ececec"></div>
<div class="a" style="left:63px;top:235.4px;width:52px;height:11px;background:#ececec"></div>
<div class="a" style="left:63px;top:247.3px;width:52px;height:11px;background:#ececec"></div>
<div class="a" style="left:63px;top:259.2px;width:52px;height:11px;background:#ececec"></div>
<div class="a" style="left:58.200px;top:222px;width:4.200px;height:68px;background:#fff"></div>
<div class="a" style="left:58.200px;top:234.7px;width:4.200px;height:0.800px;background:#9dbbe6"></div>
<div class="a" style="left:58.200px;top:246.6px;width:4.200px;height:0.800px;background:#9dbbe6"></div>
<div class="a" style="left:58.200px;top:258.5px;width:4.200px;height:0.800px;background:#9dbbe6"></div>
<div class="a" style="left:58.200px;top:270.4px;width:4.200px;height:0.800px;background:#9dbbe6"></div>
<div class="a" style="left:62.300px;top:221.500px;width:0.700px;height:68.500px;background:#f2b8a8"></div>
<div class="a" style="left:1.500px;top:290px;width:124px;height:9.500px;background:#f0f0f0"></div>
<div class="a" style="left:13px;top:290.500px;width:36px;height:8.500px;background:#cdcdcd"></div>
<svg style="left:3.500px;top:292px" width="4" height="6"><path d="M3.500 0.500l-2.500 2.500 2.500 2.500" stroke="#555" stroke-width="1" fill="none"></path></svg>
<svg style="left:107.500px;top:292px" width="4" height="6"><path d="M0.500 0.500l2.500 2.500-2.500 2.500" stroke="#555" stroke-width="1" fill="none"></path></svg>
<div class="a" style="left:115.500px;top:207.3px;width:10px;height:84px;background:#f0f0f0"></div>
<div class="a" style="left:116px;top:219.3px;width:9px;height:37.500px;background:#cdcdcd"></div>
<svg style="left:117.500px;top:212.3px" width="6" height="4"><path d="M0.500 3.500l2.500-2.500 2.500 2.500" stroke="#555" stroke-width="1" fill="none"></path></svg>
<svg style="left:117.500px;top:283.8px" width="6" height="4"><path d="M0.500 0.500l2.500 2.500 2.500-2.500" stroke="#555" stroke-width="1" fill="none"></path></svg>
<div class="a" style="left:126px;top:83px;width:13.500px;height:219px;background:#2b3340"></div>
<div class="a" style="left:126px;top:16px;width:13.500px;height:67px;background:#3e4757"></div>
<div class="t" style="left: 132.5px; top: 49.7px; font-size: 7.3px; color: rgb(255, 255, 255); transform: translate(-50%, -50%) rotate(-90deg) scaleX(0.9208);">Prospector</div>
<div class="t" style="left: 132.5px; top: 116.7px; font-size: 7.3px; color: rgb(195, 200, 207); transform: translate(-50%, -50%) rotate(-90deg) scaleX(0.9668);">Settings</div>
<div class="t" style="left: 132.5px; top: 185.8px; font-size: 7.3px; color: rgb(195, 200, 207); transform: translate(-50%, -50%) rotate(-90deg) scaleX(0.8671);">Survey</div>
<div class="t" style="left: 132.5px; top: 253.7px; font-size: 7.3px; color: rgb(195, 200, 207); transform: translate(-50%, -50%) rotate(-90deg) scaleX(0.962);">Toolbox</div>
</div>
<div class="a" style="left:139.500px;top:146.500px;width:608.700px;height:303.400px;background:#fff;overflow:hidden" id="vp">
<svg style="left:-139.500px;top:-146.500px" width="768" height="478" viewBox="0 0 768 478">
<path d="M293.2 259.4 314.8 267.2 336.4 275.0 358.0 282.9 379.6 290.7" stroke="#7d6b52" stroke-width="0.8" fill="none"></path>
<path d="M285.5 280.7 307.1 288.5 328.7 296.3 350.3 304.1 371.8 311.9" stroke="#7d6b52" stroke-width="0.8" fill="none"></path>
<path d="M337.0 273.3 358.6 281.1 380.2 288.9" stroke="#7d6b52" stroke-width="0.8" fill="none"></path>
<path d="M328.1 298.1 349.6 305.9 371.2 313.7" stroke="#7d6b52" stroke-width="0.8" fill="none"></path>
<path d="M249.4 245.6 271.0 253.4 292.6 261.2 314.2 269.0 335.7 276.8 357.3 284.6 378.9 292.5" stroke="#1f6b40" stroke-width="1.2" fill="none"></path>
<path d="M183.7 224.9 205.3 232.7 226.9 240.5 248.4 248.3 270.0 256.1 291.6 263.9 313.2 271.8 334.8 279.6 356.3 287.4 377.9 295.2" stroke="#153b30" stroke-width="1.3" fill="none"></path>
<path d="M182.7 227.8 204.2 235.6 225.8 243.4 247.4 251.3 269.0 259.1 290.5 266.9 312.1 274.7 333.7 282.5 355.3 290.3 376.9 298.1" stroke="#11344b" stroke-width="1.3" fill="none"></path>
<path d="M243.0 263.3 264.6 271.1 286.2 278.9 307.8 286.7 329.3 294.5 350.9 302.3 372.5 310.1" stroke="#1f6b40" stroke-width="1.2" fill="none"></path>
<path d="M179.3 237.1 200.9 244.9 222.4 252.8 244.0 260.6 265.6 268.4 287.2 276.2 308.8 284.0 330.3 291.8 351.9 299.6 373.5 307.4" stroke="#153b30" stroke-width="1.3" fill="none"></path>
<path d="M180.3 234.2 201.9 242.0 223.5 249.8 245.1 257.7 266.6 265.5 288.2 273.3 309.8 281.1 331.4 288.9 353.0 296.7 374.5 304.5" stroke="#11344b" stroke-width="1.3" fill="none"></path>
<path d="M181.5 231.0 203.1 238.8 224.6 246.6 246.2 254.5 267.8 262.3 289.4 270.1 311.0 277.9 332.5 285.7 354.1 293.5 375.7 301.3" stroke="#1a45a0" stroke-width="2.8" fill="none"></path>
<path d="M184.3 223.3 206.0 230.7 227.8 237.8 249.7 244.8 271.6 251.6 293.6 258.4 315.6 265.1 337.5 271.8 359.4 278.9 381.1 286.4" stroke="#258a52" stroke-width="1.0" fill="none"></path>
<path d="M184.9 221.6 206.6 229.0 228.5 236.1 250.3 243.1 272.3 249.9 294.2 256.7 316.2 263.4 338.2 270.2 360.0 277.2 381.7 284.7" stroke="#1fc47a" stroke-width="1.8" fill="none"></path>
<path d="M178.7 238.7 200.1 247.0 221.5 255.5 242.7 264.1 264.0 272.9 285.2 281.7 306.3 290.7 327.5 299.5 348.8 308.1 370.3 316.2" stroke="#258a52" stroke-width="1.0" fill="none"></path>
<path d="M178.1 240.4 199.5 248.7 220.8 257.2 242.1 265.8 263.4 274.6 284.5 283.4 305.7 292.3 326.9 301.2 348.2 309.8 369.7 317.9" stroke="#1fc47a" stroke-width="1.8" fill="none"></path>
<path d="M473.6 325.9 481.8 328.9 490.1 332.0 498.4 335.2 506.5 338.5 514.5 341.8 522.3 344.8 530.2 347.6 538.3 350.2 546.4 352.7 554.6 355.1 562.9 357.3 571.1 359.5 579.4 361.5 587.7 363.3 596.0 365.0 604.3 366.6 612.6 367.9 621.0 369.0 629.4 369.9 637.8 370.6 646.2 371.1 654.6 371.4 663.2 371.5 671.7 371.5 680.2 371.5 688.6 371.2 696.9 370.7 705.2 369.9 713.6 368.8 722.0 367.6 730.5 366.2 738.9 364.8 747.4 363.3 755.8 361.6 764.1 359.9 772.5 358.0" stroke="#7d6b52" stroke-width="0.8" fill="none"></path>
<path d="M465.9 347.2 474.0 350.1 482.0 353.1 490.0 356.2 498.0 359.5 506.1 362.8 514.5 366.0 523.0 369.0 531.5 371.8 540.0 374.4 548.5 376.8 557.1 379.2 565.6 381.4 574.3 383.5 583.0 385.4 591.7 387.2 600.5 388.8 609.4 390.2 618.3 391.4 627.2 392.4 636.2 393.1 645.1 393.6 654.0 394.0 662.9 394.1 671.8 394.1 680.7 394.1 689.7 393.8 698.7 393.2 707.7 392.3 716.6 391.2 725.4 389.9 734.2 388.5 742.9 387.1 751.6 385.5 760.2 383.8 768.9 382.0 777.5 380.0" stroke="#7d6b52" stroke-width="0.8" fill="none"></path>
<path d="M448.7 318.6 456.7 321.8 464.8 324.7 473.0 327.7 481.2 330.7 489.4 333.8 497.7 337.0 505.8 340.3 513.8 343.5 521.7 346.6 529.6 349.4 537.7 352.1 545.9 354.5 554.1 356.9 562.4 359.2 570.7 361.3 579.0 363.3 587.3 365.2 595.6 366.9 604.0 368.4 612.4 369.8 620.8 370.9 629.2 371.8 637.6 372.5 646.1 373.0 654.6 373.3 663.1 373.4 671.7 373.4 680.2 373.4 688.7 373.1 697.1 372.6 705.4 371.7 713.8 370.7 722.3 369.4 730.8 368.1 739.3 366.7 747.7 365.1 756.1 363.5 764.5 361.7 772.9 359.8" stroke="#1f6b40" stroke-width="1.2" fill="none"></path>
<path d="M447.7 321.3 455.7 324.5 463.8 327.5 472.0 330.4 480.2 333.4 488.4 336.5 496.6 339.7 504.7 343.0 512.7 346.2 520.7 349.3 528.7 352.2 536.8 354.8 545.0 357.3 553.3 359.7 561.6 362.0 570.0 364.1 578.3 366.1 586.7 368.0 595.1 369.7 603.5 371.3 611.9 372.6 620.4 373.7 628.9 374.7 637.4 375.4 645.9 375.9 654.5 376.2 663.1 376.3 671.7 376.3 680.3 376.3 688.8 376.0 697.3 375.5 705.8 374.6 714.2 373.6 722.8 372.3 731.3 371.0 739.8 369.5 748.3 368.0 756.7 366.3 765.1 364.6 773.6 362.7" stroke="#153b30" stroke-width="1.3" fill="none"></path>
<path d="M446.5 324.2 454.6 327.4 462.7 330.4 470.9 333.3 479.1 336.3 487.3 339.4 495.4 342.6 503.5 345.9 511.5 349.1 519.6 352.2 527.7 355.1 535.9 357.8 544.2 360.3 552.5 362.7 560.8 364.9 569.2 367.1 577.6 369.2 586.0 371.1 594.5 372.8 603.0 374.3 611.5 375.7 620.0 376.8 628.6 377.7 637.2 378.5 645.8 379.0 654.4 379.3 663.1 379.4 671.7 379.4 680.4 379.4 689.0 379.1 697.6 378.5 706.1 377.7 714.7 376.6 723.2 375.4 731.8 374.0 740.3 372.6 748.8 371.0 757.3 369.4 765.8 367.6 774.3 365.7" stroke="#11344b" stroke-width="1.3" fill="none"></path>
<path d="M441.9 336.2 450.1 339.3 458.3 342.4 466.5 345.4 474.7 348.3 482.7 351.3 490.7 354.5 498.7 357.7 506.8 361.0 515.1 364.2 523.6 367.2 532.1 370.0 540.6 372.6 549.0 375.0 557.5 377.3 566.1 379.5 574.7 381.6 583.4 383.6 592.1 385.4 600.8 387.0 609.7 388.4 618.5 389.5 627.4 390.5 636.3 391.2 645.2 391.7 654.1 392.1 662.9 392.2 671.8 392.2 680.6 392.2 689.6 391.9 698.6 391.3 707.5 390.4 716.4 389.3 725.1 388.0 733.8 386.7 742.5 385.2 751.2 383.6 759.9 381.9 768.5 380.1 777.1 378.2" stroke="#1f6b40" stroke-width="1.2" fill="none"></path>
<path d="M442.9 333.5 451.1 336.6 459.3 339.7 467.5 342.6 475.7 345.6 483.7 348.6 491.8 351.8 499.8 355.0 507.9 358.3 516.1 361.5 524.5 364.5 532.9 367.2 541.4 369.8 549.8 372.2 558.3 374.5 566.8 376.7 575.4 378.8 584.0 380.7 592.6 382.5 601.3 384.1 610.1 385.5 618.9 386.7 627.7 387.6 636.5 388.3 645.3 388.8 654.2 389.2 663.0 389.3 671.8 389.3 680.6 389.3 689.5 389.0 698.3 388.4 707.2 387.5 716.0 386.4 724.7 385.2 733.4 383.8 742.0 382.3 750.7 380.8 759.3 379.1 767.9 377.3 776.4 375.3" stroke="#153b30" stroke-width="1.3" fill="none"></path>
<path d="M444.1 330.6 452.2 333.7 460.4 336.8 468.6 339.7 476.7 342.7 484.9 345.7 492.9 348.9 501.0 352.2 509.0 355.4 517.2 358.6 525.5 361.5 533.9 364.3 542.2 366.8 550.7 369.2 559.1 371.5 567.6 373.7 576.1 375.8 584.6 377.7 593.2 379.5 601.8 381.0 610.5 382.4 619.2 383.6 628.0 384.5 636.7 385.2 645.5 385.7 654.2 386.1 663.0 386.2 671.8 386.2 680.5 386.2 689.3 385.9 698.1 385.3 706.9 384.5 715.6 383.4 724.2 382.1 732.9 380.7 741.5 379.3 750.1 377.7 758.7 376.0 767.2 374.2 775.7 372.3" stroke="#11344b" stroke-width="1.3" fill="none"></path>
<path d="M445.3 327.4 453.4 330.5 461.6 333.6 469.7 336.5 477.9 339.5 486.1 342.6 494.2 345.7 502.2 349.0 510.3 352.3 518.4 355.4 526.6 358.3 534.9 361.0 543.2 363.5 551.6 365.9 560.0 368.2 568.4 370.4 576.8 372.5 585.3 374.4 593.9 376.1 602.4 377.7 611.0 379.1 619.6 380.2 628.3 381.1 637.0 381.9 645.6 382.4 654.3 382.7 663.0 382.8 671.7 382.8 680.4 382.8 689.1 382.5 697.8 381.9 706.5 381.1 715.1 380.0 723.7 378.7 732.3 377.4 740.9 375.9 749.5 374.4 758.0 372.7 766.5 370.9 775.0 369.0" stroke="#1a45a0" stroke-width="2.8" fill="none"></path>
<path d="M449.1 317.7 457.3 320.2 465.6 322.6 473.9 325.0 482.3 327.7 490.7 330.5 499.0 333.6 507.2 336.8 515.1 340.0 523.0 343.0 530.9 345.8 538.9 348.3 547.0 350.7 555.2 353.0 563.4 355.4 571.6 357.6 579.8 359.8 588.0 361.7 596.3 363.5 604.6 365.0 612.9 366.4 621.2 367.5 629.5 368.5 637.9 369.2 646.2 369.7 654.7 370.0 663.2 370.1 671.7 370.1 680.2 370.1 688.5 369.8 696.8 369.3 705.1 368.5 713.4 367.4 721.8 366.2 730.3 364.8 738.7 363.4 747.1 361.9 755.5 360.3 763.8 358.5 772.2 356.6" stroke="#258a52" stroke-width="1.0" fill="none"></path>
<path d="M449.7 316.0 458.0 318.5 466.2 320.9 474.5 323.4 482.9 326.0 491.3 328.8 499.7 331.9 507.9 335.2 515.8 338.3 523.6 341.4 531.5 344.1 539.4 346.6 547.5 349.0 555.7 351.3 563.9 353.6 572.0 355.9 580.2 358.0 588.4 360.0 596.6 361.7 604.9 363.3 613.1 364.6 621.4 365.7 629.7 366.7 638.0 367.4 646.3 367.9 654.7 368.2 663.2 368.3 671.7 368.3 680.1 368.3 688.5 368.0 696.7 367.5 704.9 366.7 713.2 365.6 721.5 364.4 730.0 363.1 738.4 361.6 746.8 360.1 755.1 358.5 763.4 356.8 771.8 354.9" stroke="#1fc47a" stroke-width="1.8" fill="none"></path>
<path d="M441.5 337.1 449.5 340.9 457.5 344.6 465.6 348.0 473.6 351.4 481.5 354.6 489.3 357.9 497.3 361.2 505.4 364.5 513.8 367.8 522.3 370.9 530.9 373.7 539.4 376.4 548.0 378.8 556.5 381.1 565.2 383.2 573.9 385.2 582.6 387.0 591.4 388.8 600.3 390.3 609.2 391.7 618.1 392.9 627.1 393.8 636.1 394.5 645.1 395.0 654.0 395.4 662.9 395.5 671.8 395.5 680.7 395.5 689.7 395.2 698.8 394.6 707.9 393.7 716.8 392.6 725.6 391.3 734.4 389.9 743.1 388.4 751.8 386.9 760.5 385.2 769.2 383.3 777.8 381.4" stroke="#258a52" stroke-width="1.0" fill="none"></path>
<path d="M440.9 338.8 448.8 342.6 456.9 346.3 465.0 349.7 472.9 353.0 480.8 356.3 488.6 359.6 496.6 362.9 504.8 366.2 513.2 369.5 521.7 372.6 530.3 375.5 538.9 378.1 547.5 380.6 556.1 382.8 564.7 384.9 573.5 386.9 582.2 388.8 591.1 390.5 600.0 392.1 608.9 393.5 617.9 394.7 626.9 395.6 635.9 396.3 645.0 396.8 654.0 397.2 662.9 397.3 671.8 397.3 680.8 397.3 689.8 397.0 699.0 396.4 708.1 395.5 717.1 394.4 725.9 393.1 734.7 391.7 743.4 390.2 752.1 388.6 760.9 386.9 769.6 385.1 778.2 383.1" stroke="#1fc47a" stroke-width="1.8" fill="none"></path>
<path d="M184.9 221.6 L178.1 240.4" stroke="#1fc47a" stroke-width="1.8" fill="none"></path>
<path d="M381.7 284.7 L369.7 317.9" stroke="#1fc47a" stroke-width="1.8" fill="none"></path>
<path d="M449.7 316.0 L440.9 338.8" stroke="#1fc47a" stroke-width="1.8" fill="none"></path>
<path d="M379.8 294.1 448.4 318.6 441.6 337.8 373.0 313.4Z" fill="#080808" stroke="#080808" stroke-width="0.8"></path>
<path d="M378.4 298.1 447.0 322.5" stroke="#4a4a4a" stroke-width="0.5" fill="none" stroke-dasharray="1.4 1"></path>
<path d="M377.1 301.9 445.7 326.3" stroke="#4a4a4a" stroke-width="0.5" fill="none" stroke-dasharray="1.4 1"></path>
<path d="M375.7 305.6 444.3 330.1" stroke="#4a4a4a" stroke-width="0.5" fill="none" stroke-dasharray="1.4 1"></path>
<path d="M374.4 309.4 443.0 333.9" stroke="#4a4a4a" stroke-width="0.5" fill="none" stroke-dasharray="1.4 1"></path>
<path d="M382.2 284.8 C388 284.2 396 285.5 403.6 289.3 C412 293.5 420 301.5 427 306.9 C434 311.5 441 315 448.8 316" stroke="#5f9d2f" stroke-width="1.0" fill="none"></path>
<path d="M369.3 317.7 C371.5 324.5 377 328.5 383.5 330.3 C391 333 401 335.8 410.3 336.2 C419 336.6 428 336.2 433.7 337.3 L441.3 338.7" stroke="#5f9d2f" stroke-width="1.0" fill="none"></path>
<path d="M194.9 197.0 L172.1 260.0" stroke="#2a74dc" stroke-width="0.9" fill="none" stroke-opacity="0.9"></path>
<path d="M195.1 196.6 L199.5 184.4" stroke="#f2382a" stroke-width="1.4" fill="none" stroke-dasharray="0.9 0.45" stroke-opacity="0.82"></path>
<path d="M210.5 202.7 L187.6 265.7" stroke="#2a74dc" stroke-width="0.9" fill="none" stroke-opacity="0.9"></path>
<path d="M210.7 202.2 L215.1 190.0" stroke="#f2382a" stroke-width="1.4" fill="none" stroke-dasharray="0.9 0.45" stroke-opacity="0.82"></path>
<path d="M227.5 208.9 L204.7 271.9" stroke="#2a74dc" stroke-width="0.9" fill="none" stroke-opacity="0.9"></path>
<path d="M227.7 208.4 L232.1 196.2" stroke="#f2382a" stroke-width="1.4" fill="none" stroke-dasharray="0.9 0.45" stroke-opacity="0.82"></path>
<path d="M243.1 214.5 L220.3 277.5" stroke="#2a74dc" stroke-width="0.9" fill="none" stroke-opacity="0.9"></path>
<path d="M243.2 214.0 L247.7 201.8" stroke="#f2382a" stroke-width="1.4" fill="none" stroke-dasharray="0.9 0.45" stroke-opacity="0.82"></path>
<path d="M258.6 220.1 L235.8 283.1" stroke="#2a74dc" stroke-width="0.9" fill="none" stroke-opacity="0.9"></path>
<path d="M258.8 219.7 L263.2 207.4" stroke="#f2382a" stroke-width="1.4" fill="none" stroke-dasharray="0.9 0.45" stroke-opacity="0.82"></path>
<path d="M274.2 225.8 L251.4 288.8" stroke="#2a74dc" stroke-width="0.9" fill="none" stroke-opacity="0.9"></path>
<path d="M274.4 225.3 L278.8 213.1" stroke="#f2382a" stroke-width="1.4" fill="none" stroke-dasharray="0.9 0.45" stroke-opacity="0.82"></path>
<path d="M289.8 231.4 L267.0 294.4" stroke="#2a74dc" stroke-width="0.9" fill="none" stroke-opacity="0.9"></path>
<path d="M290.0 230.9 L294.4 218.7" stroke="#f2382a" stroke-width="1.4" fill="none" stroke-dasharray="0.9 0.45" stroke-opacity="0.82"></path>
<path d="M304.9 236.9 L282.1 299.9" stroke="#2a74dc" stroke-width="0.9" fill="none" stroke-opacity="0.9"></path>
<path d="M305.0 236.4 L309.5 224.2" stroke="#f2382a" stroke-width="1.4" fill="none" stroke-dasharray="0.9 0.45" stroke-opacity="0.82"></path>
<path d="M320.5 242.5 L297.7 305.5" stroke="#2a74dc" stroke-width="0.9" fill="none" stroke-opacity="0.9"></path>
<path d="M320.6 242.0 L325.0 229.8" stroke="#f2382a" stroke-width="1.4" fill="none" stroke-dasharray="0.9 0.45" stroke-opacity="0.82"></path>
<path d="M336.0 248.1 L313.3 311.1" stroke="#2a74dc" stroke-width="0.9" fill="none" stroke-opacity="0.9"></path>
<path d="M336.2 247.6 L340.6 235.4" stroke="#f2382a" stroke-width="1.4" fill="none" stroke-dasharray="0.9 0.45" stroke-opacity="0.82"></path>
<path d="M351.6 253.8 L328.8 316.8" stroke="#2a74dc" stroke-width="0.9" fill="none" stroke-opacity="0.9"></path>
<path d="M351.8 253.3 L356.2 241.1" stroke="#f2382a" stroke-width="1.4" fill="none" stroke-dasharray="0.9 0.45" stroke-opacity="0.82"></path>
<path d="M367.2 259.4 L344.4 322.4" stroke="#2a74dc" stroke-width="0.9" fill="none" stroke-opacity="0.9"></path>
<path d="M367.4 258.9 L371.8 246.7" stroke="#f2382a" stroke-width="1.4" fill="none" stroke-dasharray="0.9 0.45" stroke-opacity="0.82"></path>
<path d="M382.8 265.0 L360.0 328.0" stroke="#2a74dc" stroke-width="0.9" fill="none" stroke-opacity="0.9"></path>
<path d="M383.0 264.6 L387.4 252.4" stroke="#f2382a" stroke-width="1.4" fill="none" stroke-dasharray="0.9 0.45" stroke-opacity="0.82"></path>
<path d="M396.5 272.2 L374.0 335.3" stroke="#7a5fd0" stroke-width="0.9" fill="none" stroke-opacity="0.9"></path>
<path d="M396.6 271.7 L401.0 259.4" stroke="#f2382a" stroke-width="1.4" fill="none" stroke-dasharray="0.9 0.45" stroke-opacity="0.82"></path>
<path d="M411.7 277.6 L389.2 340.7" stroke="#2a74dc" stroke-width="0.9" fill="none" stroke-opacity="0.9"></path>
<path d="M411.8 277.1 L416.2 264.9" stroke="#f2382a" stroke-width="1.4" fill="none" stroke-dasharray="0.9 0.45" stroke-opacity="0.82"></path>
<path d="M427.3 283.2 L404.8 346.3" stroke="#7a5fd0" stroke-width="0.9" fill="none" stroke-opacity="0.9"></path>
<path d="M427.5 282.7 L431.9 270.4" stroke="#f2382a" stroke-width="1.4" fill="none" stroke-dasharray="0.9 0.45" stroke-opacity="0.82"></path>
<path d="M443.0 288.7 L420.5 351.8" stroke="#2a74dc" stroke-width="0.9" fill="none" stroke-opacity="0.9"></path>
<path d="M443.1 288.3 L447.5 276.0" stroke="#f2382a" stroke-width="1.4" fill="none" stroke-dasharray="0.9 0.45" stroke-opacity="0.82"></path>
<path d="M459.6 293.8 L434.8 356.1" stroke="#2a74dc" stroke-width="0.9" fill="none" stroke-opacity="0.9"></path>
<path d="M459.8 293.3 L464.6 281.3" stroke="#f2382a" stroke-width="1.4" fill="none" stroke-dasharray="0.9 0.45" stroke-opacity="0.82"></path>
<path d="M474.1 299.3 L451.1 362.2" stroke="#2a74dc" stroke-width="0.9" fill="none" stroke-opacity="0.9"></path>
<path d="M474.3 298.8 L478.7 286.6" stroke="#f2382a" stroke-width="1.4" fill="none" stroke-dasharray="0.9 0.45" stroke-opacity="0.82"></path>
<path d="M489.3 304.8 L466.3 367.7" stroke="#2a74dc" stroke-width="0.9" fill="none" stroke-opacity="0.9"></path>
<path d="M489.5 304.3 L493.9 292.1" stroke="#f2382a" stroke-width="1.4" fill="none" stroke-dasharray="0.9 0.45" stroke-opacity="0.82"></path>
<path d="M505.7 311.0 L480.9 373.3" stroke="#2a74dc" stroke-width="0.9" fill="none" stroke-opacity="0.9"></path>
<path d="M505.9 310.6 L510.7 298.5" stroke="#f2382a" stroke-width="1.4" fill="none" stroke-dasharray="0.9 0.45" stroke-opacity="0.82"></path>
<path d="M521.2 317.3 L496.2 379.5" stroke="#2a74dc" stroke-width="0.9" fill="none" stroke-opacity="0.9"></path>
<path d="M521.4 316.9 L526.3 304.8" stroke="#f2382a" stroke-width="1.4" fill="none" stroke-dasharray="0.9 0.45" stroke-opacity="0.82"></path>
<path d="M535.2 322.7 L512.9 385.9" stroke="#2a74dc" stroke-width="0.9" fill="none" stroke-opacity="0.9"></path>
<path d="M535.4 322.2 L539.7 310.0" stroke="#f2382a" stroke-width="1.4" fill="none" stroke-dasharray="0.9 0.45" stroke-opacity="0.82"></path>
<path d="M549.0 327.2 L529.5 391.3" stroke="#2a74dc" stroke-width="0.9" fill="none" stroke-opacity="0.9"></path>
<path d="M549.1 326.7 L552.9 314.3" stroke="#f2382a" stroke-width="1.4" fill="none" stroke-dasharray="0.9 0.45" stroke-opacity="0.82"></path>
<path d="M564.0 331.5 L546.2 396.1" stroke="#2a74dc" stroke-width="0.9" fill="none" stroke-opacity="0.9"></path>
<path d="M564.1 331.0 L567.6 318.5" stroke="#f2382a" stroke-width="1.4" fill="none" stroke-dasharray="0.9 0.45" stroke-opacity="0.82"></path>
<path d="M579.1 335.5 L563.0 400.5" stroke="#2a74dc" stroke-width="0.9" fill="none" stroke-opacity="0.9"></path>
<path d="M579.2 335.0 L582.3 322.4" stroke="#f2382a" stroke-width="1.4" fill="none" stroke-dasharray="0.9 0.45" stroke-opacity="0.82"></path>
<path d="M594.0 338.9 L580.1 404.5" stroke="#2a74dc" stroke-width="0.9" fill="none" stroke-opacity="0.9"></path>
<path d="M594.2 338.4 L596.9 325.7" stroke="#f2382a" stroke-width="1.4" fill="none" stroke-dasharray="0.9 0.45" stroke-opacity="0.82"></path>
<path d="M608.8 341.8 L597.6 407.8" stroke="#2a74dc" stroke-width="0.9" fill="none" stroke-opacity="0.9"></path>
<path d="M608.9 341.3 L611.1 328.5" stroke="#f2382a" stroke-width="1.4" fill="none" stroke-dasharray="0.9 0.45" stroke-opacity="0.82"></path>
<path d="M623.2 343.9 L615.0 410.4" stroke="#2a74dc" stroke-width="0.9" fill="none" stroke-opacity="0.9"></path>
<path d="M623.2 343.4 L624.8 330.5" stroke="#f2382a" stroke-width="1.4" fill="none" stroke-dasharray="0.9 0.45" stroke-opacity="0.82"></path>
<path d="M637.9 345.3 L632.9 412.1" stroke="#2a74dc" stroke-width="0.9" fill="none" stroke-opacity="0.9"></path>
<path d="M638.0 344.8 L638.9 331.9" stroke="#f2382a" stroke-width="1.4" fill="none" stroke-dasharray="0.9 0.45" stroke-opacity="0.82"></path>
<path d="M652.9 346.1 L650.8 413.1" stroke="#2a74dc" stroke-width="0.9" fill="none" stroke-opacity="0.9"></path>
<path d="M652.9 345.6 L653.3 332.6" stroke="#f2382a" stroke-width="1.4" fill="none" stroke-dasharray="0.9 0.45" stroke-opacity="0.82"></path>
<path d="M668.4 346.3 L668.2 413.3" stroke="#2a74dc" stroke-width="0.9" fill="none" stroke-opacity="0.9"></path>
<path d="M668.4 345.8 L668.4 332.8" stroke="#f2382a" stroke-width="1.4" fill="none" stroke-dasharray="0.9 0.45" stroke-opacity="0.82"></path>
<path d="M683.3 346.2 L685.4 413.1" stroke="#2a74dc" stroke-width="0.9" fill="none" stroke-opacity="0.9"></path>
<path d="M683.3 345.7 L682.9 332.7" stroke="#f2382a" stroke-width="1.4" fill="none" stroke-dasharray="0.9 0.45" stroke-opacity="0.82"></path>
<path d="M697.5 345.3 L703.8 412.0" stroke="#2a74dc" stroke-width="0.9" fill="none" stroke-opacity="0.9"></path>
<path d="M697.5 344.8 L696.3 331.9" stroke="#f2382a" stroke-width="1.4" fill="none" stroke-dasharray="0.9 0.45" stroke-opacity="0.82"></path>
<path d="M712.2 343.5 L721.7 409.9" stroke="#2a74dc" stroke-width="0.9" fill="none" stroke-opacity="0.9"></path>
<path d="M712.2 343.0 L710.3 330.2" stroke="#f2382a" stroke-width="1.4" fill="none" stroke-dasharray="0.9 0.45" stroke-opacity="0.82"></path>
<path d="M727.8 341.1 L738.7 407.2" stroke="#2a74dc" stroke-width="0.9" fill="none" stroke-opacity="0.9"></path>
<path d="M727.7 340.6 L725.6 327.8" stroke="#f2382a" stroke-width="1.4" fill="none" stroke-dasharray="0.9 0.45" stroke-opacity="0.82"></path>
<path d="M743.3 338.4 L755.7 404.2" stroke="#2a74dc" stroke-width="0.9" fill="none" stroke-opacity="0.9"></path>
<path d="M743.2 337.9 L740.8 325.1" stroke="#f2382a" stroke-width="1.4" fill="none" stroke-dasharray="0.9 0.45" stroke-opacity="0.82"></path>
<path d="M758.2 335.4 L772.3 400.9" stroke="#2a74dc" stroke-width="0.9" fill="none" stroke-opacity="0.9"></path>
<path d="M758.1 334.9 L755.3 322.2" stroke="#f2382a" stroke-width="1.4" fill="none" stroke-dasharray="0.9 0.45" stroke-opacity="0.82"></path>
<path d="M234.8 211.5 L212.0 274.5" stroke="#2a74dc" stroke-width="0.9" fill="none" stroke-opacity="0.9"></path>
<path d="M235.0 211.0 L239.4 198.8" stroke="#f2382a" stroke-width="1.4" fill="none" stroke-dasharray="0.9 0.45" stroke-opacity="0.82"></path>
<path d="M389.6 269.7 L367.1 332.8" stroke="#2a74dc" stroke-width="0.9" fill="none" stroke-opacity="0.9"></path>
<path d="M389.7 269.2 L394.1 257.0" stroke="#f2382a" stroke-width="1.4" fill="none" stroke-dasharray="0.9 0.45" stroke-opacity="0.82"></path>
<path d="M432.9 285.1 L410.4 348.2" stroke="#2a74dc" stroke-width="0.9" fill="none" stroke-opacity="0.9"></path>
<path d="M433.0 284.7 L437.4 272.4" stroke="#f2382a" stroke-width="1.4" fill="none" stroke-dasharray="0.9 0.45" stroke-opacity="0.82"></path>
<path d="M509.5 312.5 L484.3 374.7" stroke="#2a74dc" stroke-width="0.9" fill="none" stroke-opacity="0.9"></path>
<path d="M509.7 312.1 L514.5 300.0" stroke="#f2382a" stroke-width="1.4" fill="none" stroke-dasharray="0.9 0.45" stroke-opacity="0.82"></path>
<path d="M575.6 334.6 L559.1 399.5" stroke="#2a74dc" stroke-width="0.9" fill="none" stroke-opacity="0.9"></path>
<path d="M575.7 334.1 L579.0 321.5" stroke="#f2382a" stroke-width="1.4" fill="none" stroke-dasharray="0.9 0.45" stroke-opacity="0.82"></path>
<path d="M704.6 344.6 L712.6 411.1" stroke="#2a74dc" stroke-width="0.9" fill="none" stroke-opacity="0.9"></path>
<path d="M704.5 344.1 L702.9 331.2" stroke="#f2382a" stroke-width="1.4" fill="none" stroke-dasharray="0.9 0.45" stroke-opacity="0.82"></path>
<path d="M217.7 262.7 L212.6 276.8" stroke="#2b7de0" stroke-width="1.5" fill="none" stroke-dasharray="0.9 0.5" stroke-opacity="0.7"></path>
<path d="M372.8 321.0 L367.7 335.2" stroke="#2b7de0" stroke-width="1.5" fill="none" stroke-dasharray="0.9 0.5" stroke-opacity="0.7"></path>
<path d="M490.5 363.1 L484.9 377.0" stroke="#2b7de0" stroke-width="1.5" fill="none" stroke-dasharray="0.9 0.5" stroke-opacity="0.7"></path>
<path d="M416.1 336.5 L411.0 350.6" stroke="#2b7de0" stroke-width="1.5" fill="none" stroke-dasharray="0.9 0.5" stroke-opacity="0.7"></path>
<path d="M186.2 221.2 L190.6 209.0" stroke="#f2382a" stroke-width="1.4" fill="none" stroke-dasharray="0.9 0.45" stroke-opacity="0.82"></path>
<path d="M498.1 330.3 L502.9 318.2" stroke="#f2382a" stroke-width="1.4" fill="none" stroke-dasharray="0.9 0.45" stroke-opacity="0.82"></path>
<path d="M570.5 354.7 L573.7 342.1" stroke="#f2382a" stroke-width="1.4" fill="none" stroke-dasharray="0.9 0.45" stroke-opacity="0.82"></path>
<path d="M487.5 343 C488.5 340.5 492 340.2 496 342 C500 343.8 503 346.5 503.700 349 L499 348.800 C496 348.200 490.500 346.500 487.500 343Z" fill="none" stroke="#e3b51c" stroke-width="1.2"></path>
<text x="177.5" y="226.5" font-size="3.5" fill="#ff4030" font-family="Liberation Sans" transform="rotate(-70 179 225)">0</text>
<path d="M145.500 146V443" stroke="#151515" stroke-width="1"></path><path d="M145 442.500H750" stroke="#151515" stroke-width="1.200"></path>
<path d="M147.200 441.500V420" stroke="#58b860" stroke-width="1.300"></path><path d="M147.500 441.800H168.600" stroke="#d03a2e" stroke-width="1"></path><circle cx="147" cy="441.500" r="1.800" fill="none" stroke="#e0a020" stroke-width="0.900"></circle>
<path d="M148.200 412.300l2.300 3 2.300-3M150.500 415.300v2.900" stroke="#2ea043" stroke-width="0.800" fill="none"></path><path d="M171.500 436.500l4 4.500M175.500 436.500l-4 4.500" stroke="#d03a2e" stroke-width="0.700"></path>
<path d="M212.300 228.500H251M231.600 208.800V246.300" stroke="#222" stroke-width="0.900"></path><circle cx="231.600" cy="228.700" r="3.400" fill="#cdcdcd" stroke="#999" stroke-width="0.500"></circle><path d="M230.300 226.200c-1.200 1.500-1.200 3.500 0 5M232.900 226.200c1.200 1.500 1.200 3.500 0 5" fill="none" stroke="#222" stroke-width="0.900"></path>
<circle cx="713" cy="196" r="23.500" fill="none" stroke="#f9f9f9" stroke-width="8"></circle>
<rect x="702" y="185" width="22" height="22" fill="#ececec" stroke="#8c8c8c" stroke-width="0.800"></rect>
<text x="713" y="198" font-size="4.400" text-anchor="middle" fill="#8a8a8a" font-family="Liberation Sans" font-weight="bold">TOP</text>
<text x="713" y="175" font-size="8.500" text-anchor="middle" fill="#fafafa" stroke="#a9a9a9" stroke-width="0.550" font-family="Liberation Sans" font-weight="bold">N</text>
<text x="713" y="222" font-size="8.500" text-anchor="middle" fill="#fafafa" stroke="#a9a9a9" stroke-width="0.550" font-family="Liberation Sans" font-weight="bold">S</text>
<text x="689" y="198.5" font-size="8.500" text-anchor="middle" fill="#fafafa" stroke="#a9a9a9" stroke-width="0.550" font-family="Liberation Sans" font-weight="bold">W</text>
<text x="736.5" y="198.5" font-size="8.500" text-anchor="middle" fill="#fafafa" stroke="#a9a9a9" stroke-width="0.550" font-family="Liberation Sans" font-weight="bold">E</text>
<rect x="699.500" y="233" width="26" height="9.500" rx="1" fill="#e9e9ee"></rect><text x="702" y="240.300" font-size="6.300" fill="#6a6a75" font-family="Liberation Sans">WCS</text><path d="M718.500 236.200h4.500l-2.250 3z" fill="none" stroke="#9a9aa5" stroke-width="0.600"></path>
<g stroke="#777" stroke-width="0.700" fill="#e8e8e8"><rect x="711.500" y="155.500" width="6.500" height="2.500" rx="0.800"></rect><rect x="723.500" y="153.500" width="5" height="5.500"></rect><rect x="725" y="152" width="5" height="5.500"></rect><path d="M735.500 153l5 6M740.500 153l-5 6" stroke-width="1.600" stroke="#888"></path><path d="M735.500 153l5 6M740.500 153l-5 6" stroke-width="0.600" stroke="#f5f5f5"></path></g>
</svg>
<div class="t" style="left: 2.5px; top: 4.5px; font-size: 7.4px; color: rgb(17, 17, 17); transform-origin: left center; transform: scaleX(0.9981);">[−][Top][2D Wireframe]</div>
<svg style="left:2.500px;top:13.500px" width="8" height="7"><path d="M0.500 5.500h6M1.500 5.500l1-3h2.500l1 3" stroke="#777" stroke-width="0.700" fill="#ddd"></path><circle cx="4" cy="2" r="1.200" fill="#999"></circle></svg>
</div>
<div class="a" style="left:748.200px;top:146px;width:20px;height:303px;background:#2a323f"></div><div class="a" style="left:750.500px;top:146px;width:15.500px;height:303px;background:#343d4c"></div>
<svg style="left:750px;top:146px" width="18" height="303" viewBox="0 0 18 303">
<g fill="#8a919b"><rect x="5" y="2" width="1" height="1"></rect><rect x="5" y="4" width="1" height="1"></rect><rect x="7" y="2" width="1" height="1"></rect><rect x="7" y="4" width="1" height="1"></rect><rect x="9" y="2" width="1" height="1"></rect><rect x="9" y="4" width="1" height="1"></rect><rect x="11" y="2" width="1" height="1"></rect><rect x="11" y="4" width="1" height="1"></rect><rect x="13" y="2" width="1" height="1"></rect><rect x="13" y="4" width="1" height="1"></rect></g>
<path d="M3 179.5h12" stroke="#e4e6e9" stroke-width="1.100"></path>
<path d="M3 195.5h12" stroke="#e4e6e9" stroke-width="1.100"></path>
<path d="M3 240.0h12" stroke="#e4e6e9" stroke-width="1.100"></path>
<g transform="translate(4.5,8.0)"><path d="M1 0v10" stroke="#e4e6e9" stroke-width="1.200"></path><path d="M2 0.500l8 1.500-6 3.500z" fill="#e4e6e9"></path></g>
<g transform="translate(4.5,21.0)"><path d="M1 9.500h9" stroke="#e4e6e9" stroke-width="1" stroke-dasharray="1 1"></path><path d="M1 7l8-6v6z" fill="#e4e6e9"></path><path d="M1 0v10" stroke="#4aa3ea"></path></g>
<g transform="translate(4.5,34.0)"><path d="M2 0v10" stroke="#e4e6e9" stroke-width="1.200"></path><path d="M3 1l5 4-5 3z" fill="#4aa3ea"></path><path d="M8 2v7" stroke="#e4e6e9"></path></g>
<g transform="translate(4.5,46.7)"><path d="M2 0v10" stroke="#e4e6e9" stroke-width="1.200"></path><path d="M3 1.500l6 1.500-5 3z" fill="#e4e6e9"></path><path d="M6 7l3 2" stroke="#4aa3ea"></path></g>
<g transform="translate(4.5,59.5)"><rect x="1" y="0.500" width="5" height="9" fill="#e4e6e9"></rect><rect x="5" y="3" width="5" height="7" fill="#aeb3ba"></rect><path d="M2 2.500h3M2 4.500h3M2 6.500h3" stroke="#2b3340" stroke-width="0.700"></path></g>
<g transform="translate(4.5,73.0)"><circle cx="4.500" cy="4.500" r="4.300" fill="#4aa3ea"></circle><path d="M1 3c2 1 3 0 4-2M2 7c2-1 4 0 5-2" stroke="#e4f1fc" stroke-width="0.800" fill="none"></path><rect x="6" y="6" width="4.500" height="4.500" fill="#e4e6e9"></rect><path d="M6 8.200h4.500M8.200 6v4.500" stroke="#2b3340" stroke-width="0.600"></path></g>
<g transform="translate(4.5,86.4)"><circle cx="5" cy="5" r="4.800" fill="#4aa3ea"></circle><path d="M1.500 3c2 1.500 3 0 4.500-2M2 8c2-2 4.500 0 6-3" stroke="#e4f1fc" stroke-width="0.800" fill="none"></path><circle cx="5" cy="5" r="1.500" fill="#2b3340"></circle></g>
<g transform="translate(4.5,100.0)"><path d="M3 1l1 2 2 1-2 1-1 2-1-2-2-1 2-1z" fill="#e4e6e9"></path><circle cx="8" cy="8" r="1.600" fill="#4aa3ea"></circle></g>
<g transform="translate(4.5,113.8)"><path d="M3 1l1 2 2 1-2 1-1 2-1-2-2-1 2-1z" fill="#e4e6e9"></path><path d="M6 9.500l2-4 2 4" stroke="#e4e6e9" stroke-width="0.900" fill="none"></path></g>
<g transform="translate(4.5,126.6)"><path d="M3 1l1 2 2 1-2 1-1 2-1-2-2-1 2-1z" fill="#e4e6e9"></path><path d="M6 4.500l4 3-2 0.300 1 2-1 0.400-1-2-1.500 1z" fill="#e4e6e9"></path></g>
<g transform="translate(4.5,140.7)"><path d="M3 1l1 2 2 1-2 1-1 2-1-2-2-1 2-1z" fill="#e4e6e9"></path><circle cx="7.500" cy="7" r="1.800" fill="none" stroke="#e4e6e9" stroke-width="0.800"></circle><path d="M8.800 8.300l1.500 1.500" stroke="#e4e6e9"></path></g>
<g transform="translate(4.5,151.9)"><rect x="2" y="1.500" width="7" height="7" fill="none" stroke="#e4e6e9" stroke-width="0.900"></rect><circle cx="5.500" cy="5" r="2" fill="none" stroke="#4aa3ea" stroke-width="0.800"></circle><path d="M0.500 0v10" stroke="#e4e6e9" stroke-width="0.800"></path></g>
<g transform="translate(4.5,164.6)"><path d="M3.500 1.500v9" stroke="#4aa3ea" stroke-width="1.400"></path><path d="M0.500 1.500h5.500c4 0 4 5 0 5h-2.500" stroke="#4aa3ea" stroke-width="1.400" fill="none"></path></g>
<g transform="translate(4.5,183.0)"><path d="M2 9.500l3-8 3 8M3 6.500h4" stroke="#e4e6e9" stroke-width="1.200" fill="none"></path><path d="M7 3l3 3-1.500 0.300 1 2-1 0.400-1-2-1 1z" fill="#e4e6e9"></path></g>
<g transform="translate(4.5,200.0)"><path d="M1 3.500h6c3 0 3 4 0 4h-6" stroke="#4aa3ea" stroke-width="1" fill="none"></path><path d="M3 1.500l-2 2 2 2" stroke="#4aa3ea" stroke-width="0.900" fill="none"></path></g>
<g transform="translate(4.5,212.0)"><circle cx="3" cy="3" r="2" fill="#e4e6e9"></circle><path d="M3 5c4 0 5 1 6 4" stroke="#e4e6e9" stroke-width="0.900" fill="none"></path><circle cx="8" cy="8.500" r="1.400" fill="#4aa3ea"></circle></g>
<g transform="translate(4.5,223.7)"><path d="M5 0.500l1.200 2.300 2.300 1.200-2.300 1.200-1.200 2.300-1.200-2.300-2.300-1.200 2.300-1.200z" fill="#e4e6e9"></path><path d="M1 9h8" stroke="#4aa3ea" stroke-width="0.900"></path></g>
<g transform="translate(4.5,242.4)"><path d="M1.500 0.500v8.500h8.500" stroke="#e4e6e9" stroke-width="1.100" fill="none"></path><path d="M4 3h5" stroke="#e4e6e9" stroke-dasharray="1 1"></path></g>
<g transform="translate(4.5,254.3)"><path d="M1.500 9.500v-5l4-4v5zM1.500 9.500h5v-4" stroke="#e4e6e9" stroke-width="0.900" fill="none"></path><path d="M6.500 3.500l3-3M7.500 0.500h2v2" stroke="#e4e6e9" stroke-width="0.800" fill="none"></path></g>
<g transform="translate(4.5,267.8)"><path d="M1 9.500l8-8M1 9.500h9" stroke="#e4e6e9" stroke-width="1" fill="none"></path><path d="M1 1v8.500" stroke="#e4e6e9" stroke-dasharray="1 1"></path><circle cx="6" cy="7" r="1" fill="#4aa3ea"></circle></g>
<g transform="translate(4.5,281.4)"><path d="M1 9.500l8-8" stroke="#e4e6e9" stroke-width="1.100"></path><path d="M6.500 1.500h2.500v2.500M1 7v2.500h2.500" stroke="#e4e6e9" stroke-width="0.900" fill="none"></path></g>
<g transform="translate(4.5,295.0)"><circle cx="5" cy="5" r="4.300" fill="none" stroke="#e4e6e9" stroke-width="1"></circle><path d="M2 8l6-6" stroke="#e4e6e9"></path><circle cx="7" cy="7" r="2.200" fill="#f0b429"></circle></g>
</svg>
<div class="a" id="ltabs" style="top:449.900px;height:12.300px">
<div class="a" style="left:10px;top:0;width:31.500px;height:11.900px;background:#3b4453;border-radius:0 0 5px 5px"></div>
<div class="t" style="left: 15.5px; top: 2px; font-size: 7.2px; font-weight: bold; color: rgb(255, 255, 255); transform-origin: left center; transform: scaleX(0.9824);">Model</div>
<div class="a" style="left:43.500px;top:0;width:37px;height:11.500px;background:#2e3642;border-radius:0 0 3px 3px"></div>
<div class="t" style="left: 49.6px; top: 2px; font-size: 7.2px; color: rgb(195, 200, 207); transform-origin: left center; transform: scaleX(0.9735);">Layout1</div>
<div class="a" style="left:82.500px;top:0;width:37px;height:11.500px;background:#2e3642;border-radius:0 0 3px 3px"></div>
<div class="t" style="left: 88.3px; top: 2px; font-size: 7.2px; color: rgb(195, 200, 207); transform-origin: left center; transform: scaleX(0.9891);">Layout2</div>
<div class="a" style="left:123px;top:1px;width:13px;height:11px;background:#2e3642;border-radius:3px"></div>
<svg style="left:126.500px;top:3px" width="7" height="7"><path d="M3.500 0.500v6M0.500 3.500h6" stroke="#c3c8cf" stroke-width="1"></path></svg>
</div>
<div class="a" id="status">
<div class="a" style="left:0;top:0;width:101.500px;height:16px;background:#1d232c"></div><div class="a" style="left:128.300px;top:0;width:4px;height:16px;background:#1d232c"></div><div class="a" style="left:115.200px;top:0;width:1.800px;height:16px;background:#1d232c"></div>
<div class="a" style="left:129.8px;top:0;width:1.500px;height:16px;background:#1c222b"></div>
<div class="a" style="left:164.2px;top:0;width:1.500px;height:16px;background:#1c222b"></div>
<div class="a" style="left:236.2px;top:0;width:1.500px;height:16px;background:#1c222b"></div>
<div class="a" style="left:292.8px;top:0;width:1.500px;height:16px;background:#1c222b"></div>
<div class="a" style="left:308.8px;top:0;width:1.500px;height:16px;background:#1c222b"></div>
<div class="a" style="left:418.6px;top:0;width:1.500px;height:16px;background:#1c222b"></div>
<div class="a" style="left:449.2px;top:0;width:1.500px;height:16px;background:#1c222b"></div>
<div class="a" style="left:487.2px;top:0;width:1.500px;height:16px;background:#1c222b"></div>
<div class="a" style="left:526.2px;top:0;width:1.500px;height:16px;background:#1c222b"></div>
<div class="a" style="left:566.8px;top:0;width:1.500px;height:16px;background:#1c222b"></div>
<div class="a" style="left:630.2px;top:0;width:1.500px;height:16px;background:#1c222b"></div>
<div class="a" style="left:657.2px;top:0;width:1.500px;height:16px;background:#1c222b"></div>
<div class="a" style="left:698.8px;top:0;width:1.500px;height:16px;background:#1c222b"></div>
<div class="a" style="left:714.0px;top:0;width:1.500px;height:16px;background:#1c222b"></div>
<div class="a" style="left:751.8px;top:0;width:1.500px;height:16px;background:#1c222b"></div>
<div class="a" style="left:101.5px;top:1.500px;width:13.1px;height:13px;background:#4c73b0"></div>
<svg style="left:102.5px;top:2.500px" width="11" height="11" viewBox="0 0 11 11"><path d="M2 1v8.500h8" stroke="#fff" stroke-width="1.100" fill="none"></path><path d="M2 9.500h8" stroke="#fff" stroke-dasharray="1 1" stroke-width="0.500" transform="translate(0,-2)"></path></svg>
<svg style="left:117.9px;top:2.500px" width="11" height="11" viewBox="0 0 11 11"><path d="M1.500 1v8.500h8.500" stroke="#e4e6e9" stroke-width="1" fill="none"></path><path d="M1.500 9.500l6-6M5.500 3.500h2v2" stroke="#e4e6e9" stroke-width="0.900" fill="none"></path></svg>
<svg style="left:132.5px;top:2.500px" width="11" height="11" viewBox="0 0 11 11"><path d="M5.500 1l4.500 9h-9z" fill="none" stroke="#e4e6e9" stroke-width="1"></path><path d="M5.500 3.500v4.500" stroke="#e4e6e9" stroke-width="1"></path></svg>
<div class="t" style="left: 145.5px; top: 3.3px; font-size: 7.7px; color: rgb(232, 234, 237); transform-origin: left center; transform: scaleX(0.7631);">1x</div>
<svg style="left:157.0px;top:7px" width="4" height="3"><path d="M0 0h4l-2 2.300z" fill="#d5d9de"></path></svg>
<svg style="left:167.5px;top:2.500px" width="11" height="11" viewBox="0 0 11 11"><circle cx="5.500" cy="5.500" r="4.500" fill="none" stroke="#e4e6e9" stroke-width="1"></circle><path d="M2.500 3c2 0.500 2 2 1 3s0 2 1 3M6.500 1.500c-1 1.500 1 2 2 2.500s0 2 1 2.500" stroke="#e4e6e9" stroke-width="0.900" fill="none"></path></svg>
<div class="t" style="left: 179.7px; top: 3.3px; font-size: 7.7px; color: rgb(232, 234, 237); transform-origin: left center; transform: scaleX(0.9093);">OrdinalSurvey</div>
<svg style="left:227.0px;top:7px" width="4" height="3"><path d="M0 0h4l-2 2.300z" fill="#d5d9de"></path></svg>
<svg style="left:238.2px;top:2.500px" width="11" height="11" viewBox="0 0 11 11"><rect x="1.500" y="1" width="6" height="8" fill="none" stroke="#e4e6e9" stroke-width="0.900"></rect><rect x="4" y="4" width="5.500" height="6" fill="#272e39" stroke="#e4e6e9" stroke-width="0.900"></rect><path d="M5.500 6h2.500M5.500 8h2.500" stroke="#e4e6e9" stroke-width="0.600"></path></svg>
<div class="t" style="left: 251px; top: 3.3px; font-size: 7.7px; color: rgb(232, 234, 237); transform-origin: left center; transform: scaleX(0.8939);">1 : 2735.57</div>
<svg style="left:287.5px;top:7px" width="4" height="3"><path d="M0 0h4l-2 2.300z" fill="#d5d9de"></path></svg>
<div class="a" style="left:295.3px;top:1.500px;width:12.0px;height:13px;background:#4c73b0"></div>
<svg style="left:295.8px;top:2.500px" width="11" height="11" viewBox="0 0 11 11"><rect x="2.500" y="5" width="6" height="5" fill="#fff"></rect><path d="M3.800 5v-1.500a1.700 1.700 0 0 1 3.400 0v1.500" stroke="#fff" stroke-width="1" fill="none"></path></svg>
<div class="t" style="left: 315px; top: 3.3px; font-size: 7.7px; color: rgb(232, 234, 237); transform-origin: left center; transform: scaleX(0.9394);">347236.686, 313644.628, 0.0...</div>
<div class="t" style="left: 422px; top: 3.3px; font-size: 7.7px; color: rgb(232, 234, 237); transform-origin: left center; transform: scaleX(0.8667);">MODEL</div>
<svg style="left:450.3px;top:2.500px" width="11" height="11" viewBox="0 0 11 11"><path d="M1 3.500h9M1 7.500h9M3.500 1v9M7.500 1v9" stroke="#e4e6e9" stroke-width="0.900"></path></svg>
<svg style="left:465.5px;top:2.500px" width="11" height="11" viewBox="0 0 11 11"><g fill="#e4e6e9"><rect x="2" y="2" width="1.200" height="1.200"></rect><rect x="2" y="5" width="1.200" height="1.200"></rect><rect x="2" y="8" width="1.200" height="1.200"></rect><rect x="5" y="2" width="1.200" height="1.200"></rect><rect x="5" y="5" width="1.200" height="1.200"></rect><rect x="5" y="8" width="1.200" height="1.200"></rect><rect x="8" y="2" width="1.200" height="1.200"></rect><rect x="8" y="5" width="1.200" height="1.200"></rect><rect x="8" y="8" width="1.200" height="1.200"></rect></g></svg>
<svg style="left:481.6px;top:7px" width="4" height="3"><path d="M0 0h4l-2 2.300z" fill="#d5d9de"></path></svg>
<div class="a" style="left:490.0px;top:1.500px;width:13.8px;height:13px;background:#4c73b0"></div>
<svg style="left:491.5px;top:2.500px" width="11" height="11" viewBox="0 0 11 11"><path d="M2 1v8.500h8" stroke="#fff" stroke-width="1.200" fill="none"></path></svg>
<svg style="left:506.9px;top:2.500px" width="11" height="11" viewBox="0 0 11 11"><circle cx="5.500" cy="5.500" r="4" fill="none" stroke="#e4e6e9" stroke-width="0.900"></circle><path d="M5.500 5.500h5M5.500 5.500l3-4" stroke="#e4e6e9" stroke-width="0.900"></path></svg>
<svg style="left:522.0px;top:7px" width="4" height="3"><path d="M0 0h4l-2 2.300z" fill="#d5d9de"></path></svg>
<div class="a" style="left:530.0px;top:1.500px;width:27.9px;height:13px;background:#4c73b0"></div>
<div class="a" style="left:543.700px;top:1.500px;width:0.600px;height:13px;background:#272e39"></div>
<svg style="left:531.5px;top:2.500px" width="11" height="11" viewBox="0 0 11 11"><path d="M1 9.500h9M1 9.500l8-7" stroke="#fff" stroke-width="1.100" fill="none"></path></svg>
<svg style="left:545.5px;top:2.500px" width="11" height="11" viewBox="0 0 11 11"><rect x="2" y="2" width="7" height="7" fill="none" stroke="#fff" stroke-width="1"></rect><rect x="1" y="1" width="2" height="2" fill="#fff"></rect></svg>
<svg style="left:561.0px;top:7px" width="4" height="3"><path d="M0 0h4l-2 2.300z" fill="#d5d9de"></path></svg>
<svg style="left:570.5px;top:2.500px" width="11" height="11" viewBox="0 0 11 11"><path d="M5.500 1v9M1.500 3l8 5M9.500 3l-8 5" stroke="#e4e6e9" stroke-width="1.100"></path><path d="M8 0.500l2.500 2" stroke="#e4e6e9"></path></svg>
<svg style="left:585.2px;top:2.500px" width="11" height="11" viewBox="0 0 11 11"><path d="M5.500 1v5M5.500 6l-4 4M5.500 6l4 4" stroke="#e4e6e9" stroke-width="1.300" fill="none"></path></svg>
<div class="t" style="left: 600.8px; top: 3.3px; font-size: 7.7px; color: rgb(232, 234, 237); transform-origin: left center; transform: scaleX(0.9228);">1:1000</div>
<svg style="left:625.0px;top:7px" width="4" height="3"><path d="M0 0h4l-2 2.300z" fill="#d5d9de"></path></svg>
<svg style="left:634.5px;top:2.500px" width="11" height="11" viewBox="0 0 11 11"><circle cx="5.500" cy="5.500" r="2.600" fill="none" stroke="#e4e6e9" stroke-width="1.800"></circle><g stroke="#e4e6e9" stroke-width="1.500"><path d="M5.500 0.500v2M5.500 8.500v2M0.500 5.500h2M8.500 5.500h2M2 2l1.400 1.400M7.600 7.600l1.400 1.400M9 2l-1.400 1.400M3.400 7.600l-1.400 1.400"></path></g></svg>
<svg style="left:651.0px;top:7px" width="4" height="3"><path d="M0 0h4l-2 2.300z" fill="#d5d9de"></path></svg>
<svg style="left:661.0px;top:2.500px" width="11" height="11" viewBox="0 0 11 11"><path d="M5.500 1l4.500 2.500-4.500 2.500-4.500-2.500z" fill="#4aa3ea"></path><path d="M1 5.500l4.500 2.500 4.500-2.500M1 7.500l4.500 2.500 4.500-2.500" stroke="#4aa3ea" stroke-width="0.900" fill="none"></path></svg>
<div class="t" style="left: 677px; top: 3.3px; font-size: 7.7px; color: rgb(232, 234, 237); transform-origin: left center; transform: scaleX(0.9766);">3.500</div>
<svg style="left:701.9px;top:2.500px" width="11" height="11" viewBox="0 0 11 11"><rect x="1" y="1" width="4" height="4" fill="none" stroke="#e4e6e9" stroke-width="0.900"></rect><circle cx="8" cy="7.500" r="1.800" fill="none" stroke="#e4e6e9" stroke-width="0.900"></circle><path d="M3 5v4.500" stroke="#e4e6e9"></path></svg>
<svg style="left:719.5px;top:2.500px" width="11" height="11" viewBox="0 0 11 11"><path d="M1 7.500l2-4h7v4h-5l-2 2z" fill="none" stroke="#e4e6e9" stroke-width="0.900"></path><path d="M4.500 5.500h4" stroke="#e4e6e9" stroke-width="0.700"></path></svg>
<svg style="left:734.8px;top:2.500px" width="11" height="11" viewBox="0 0 11 11"><path d="M5.500 0.500l5 10h-10z" fill="#e4e6e9"></path><path d="M5.500 4v3.500M5.500 8.500v1" stroke="#272e39" stroke-width="1.100"></path></svg>
<svg style="left:752.5px;top:2.500px" width="11" height="11" viewBox="0 0 11 11"><path d="M1 2.500h9M1 5.500h9M1 8.500h9" stroke="#e4e6e9" stroke-width="1.400"></path></svg>
</div>
<div class="a" style="left:0;top:56px;width:1.500px;height:393px;background:#1b212a"></div>

</body></html>
